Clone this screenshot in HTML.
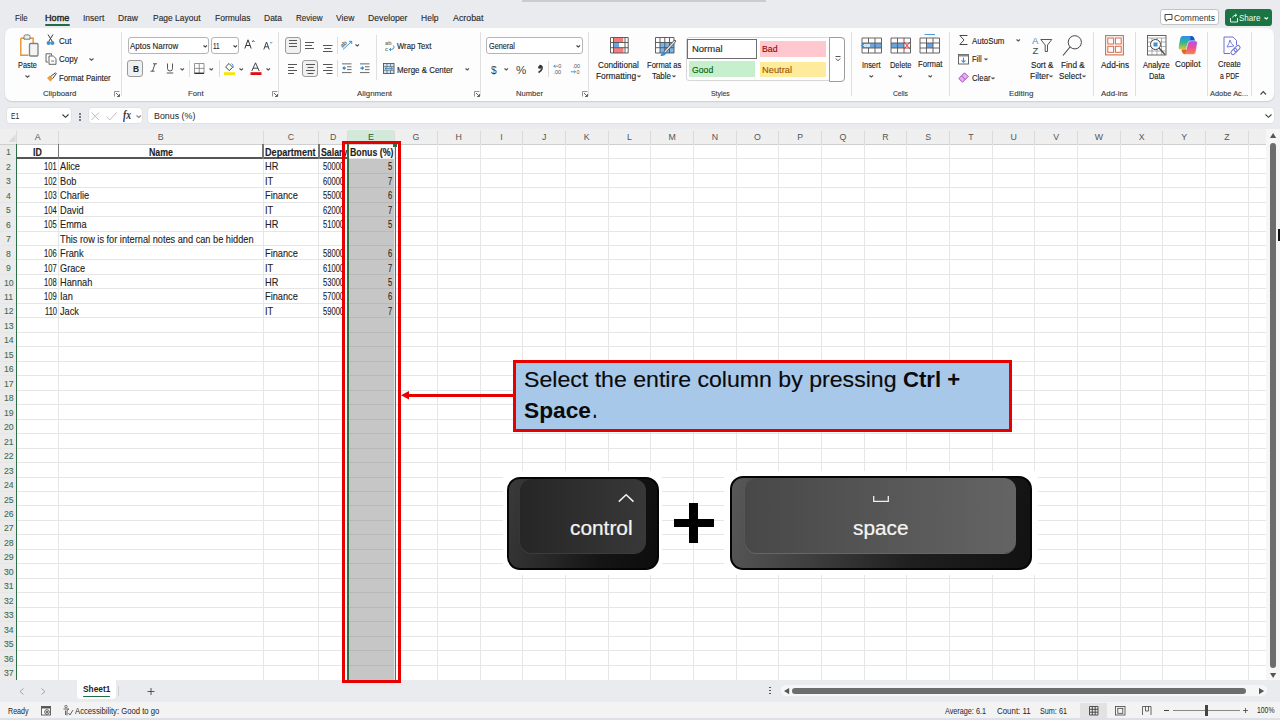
<!DOCTYPE html><html><head><meta charset="utf-8"><style>
*{margin:0;padding:0;box-sizing:border-box}
html,body{width:1280px;height:720px;overflow:hidden;background:#e9ebef;font-family:"Liberation Sans",sans-serif;color:#262626}
.a{position:absolute}
.t{position:absolute;white-space:nowrap;line-height:1}
svg{overflow:visible}
</style></head><body>
<div class="a" style="left:522.00px;top:0.00px;width:244.00px;height:1.50px;background:#c9ccd2;"></div>
<div class="t" style="left:14.50px;top:13.93px;font-size:9.3px;color:#262626;transform:scaleX(0.835);transform-origin:0 0;-webkit-text-stroke:0.1px #262626;">File</div>
<div class="t" style="left:45.00px;top:13.93px;font-size:9.3px;color:#262626;transform:scaleX(0.979);transform-origin:0 0;-webkit-text-stroke:0.4px #262626;">Home</div>
<div class="t" style="left:82.50px;top:13.93px;font-size:9.3px;color:#262626;transform:scaleX(0.916);transform-origin:0 0;-webkit-text-stroke:0.1px #262626;">Insert</div>
<div class="t" style="left:118.00px;top:13.93px;font-size:9.3px;color:#262626;transform:scaleX(0.921);transform-origin:0 0;-webkit-text-stroke:0.1px #262626;">Draw</div>
<div class="t" style="left:152.50px;top:13.93px;font-size:9.3px;color:#262626;transform:scaleX(0.910);transform-origin:0 0;-webkit-text-stroke:0.1px #262626;">Page Layout</div>
<div class="t" style="left:214.50px;top:13.93px;font-size:9.3px;color:#262626;transform:scaleX(0.915);transform-origin:0 0;-webkit-text-stroke:0.1px #262626;">Formulas</div>
<div class="t" style="left:264.00px;top:13.93px;font-size:9.3px;color:#262626;transform:scaleX(0.915);transform-origin:0 0;-webkit-text-stroke:0.1px #262626;">Data</div>
<div class="t" style="left:296.00px;top:13.93px;font-size:9.3px;color:#262626;transform:scaleX(0.869);transform-origin:0 0;-webkit-text-stroke:0.1px #262626;">Review</div>
<div class="t" style="left:335.50px;top:13.93px;font-size:9.3px;color:#262626;transform:scaleX(0.915);transform-origin:0 0;-webkit-text-stroke:0.1px #262626;">View</div>
<div class="t" style="left:367.50px;top:13.93px;font-size:9.3px;color:#262626;transform:scaleX(0.931);transform-origin:0 0;-webkit-text-stroke:0.1px #262626;">Developer</div>
<div class="t" style="left:420.50px;top:13.93px;font-size:9.3px;color:#262626;transform:scaleX(0.916);transform-origin:0 0;-webkit-text-stroke:0.1px #262626;">Help</div>
<div class="t" style="left:452.50px;top:13.93px;font-size:9.3px;color:#262626;transform:scaleX(0.952);transform-origin:0 0;-webkit-text-stroke:0.1px #262626;">Acrobat</div>
<div class="a" style="left:45.00px;top:24.20px;width:25.00px;height:2.00px;background:#1e6e42;border-radius:1px"></div>
<div class="a" style="left:1159.80px;top:9.10px;width:59.40px;height:16.30px;background:#fff;border:1px solid #c4c4c4;border-radius:3px"></div>
<svg class="a" style="left:1163.5px;top:13px;" width="9" height="9" viewBox="0 0 9 9"><path d="M1 1.5 H8 V6.5 H4 L2 8.2 V6.5 H1 Z" stroke="#333" stroke-width="0.9" fill="none"/></svg>
<div class="t" style="left:1173.50px;top:12.87px;font-size:9.6px;color:#333;transform:scaleX(0.883);transform-origin:0 0;">Comments</div>
<div class="a" style="left:1224.90px;top:9.10px;width:47.10px;height:16.90px;background:#1a7443;border-radius:3px"></div>
<svg class="a" style="left:1228.5px;top:12.5px;" width="10" height="10" viewBox="0 0 10 10"><path d="M1.5 5 V9 H8.5 V5" stroke="#fff" stroke-width="0.9" fill="none"/><path d="M3.5 4.5 Q4 2 7.5 2.2 M6 0.8 L7.7 2.2 L6 3.6" stroke="#fff" stroke-width="0.9" fill="none"/></svg>
<div class="t" style="left:1238.50px;top:12.87px;font-size:9.6px;color:#eafff0;transform:scaleX(0.839);transform-origin:0 0;">Share</div>
<svg class="a" style="left:1264.05px;top:16.675px;" width="4.5" height="2.25" viewBox="0 0 4.5 2.25"><path d="M0.5 0.5 L2.25 2.05 L4.0 0.5" stroke="#fff" stroke-width="1.15" fill="none"/></svg>
<div class="a" style="left:5.00px;top:28.00px;width:1269.00px;height:72.75px;background:#fdfdfd;border-radius:7px;box-shadow:0 1px 1.5px rgba(0,0,0,0.13)"></div>
<div class="a" style="left:121.00px;top:32.00px;width:1.00px;height:64.00px;background:#e0e0e0;"></div>
<div class="a" style="left:277.80px;top:32.00px;width:1.00px;height:64.00px;background:#e0e0e0;"></div>
<div class="a" style="left:479.80px;top:32.00px;width:1.00px;height:64.00px;background:#e0e0e0;"></div>
<div class="a" style="left:587.80px;top:32.00px;width:1.00px;height:64.00px;background:#e0e0e0;"></div>
<div class="a" style="left:851.00px;top:32.00px;width:1.00px;height:64.00px;background:#e0e0e0;"></div>
<div class="a" style="left:948.90px;top:32.00px;width:1.00px;height:64.00px;background:#e0e0e0;"></div>
<div class="a" style="left:1093.00px;top:32.00px;width:1.00px;height:64.00px;background:#e0e0e0;"></div>
<div class="a" style="left:1135.10px;top:32.00px;width:1.00px;height:64.00px;background:#e0e0e0;"></div>
<div class="a" style="left:1207.00px;top:32.00px;width:1.00px;height:64.00px;background:#e0e0e0;"></div>
<div class="a" style="left:1250.50px;top:32.00px;width:1.00px;height:64.00px;background:#e0e0e0;"></div>
<div class="t" style="left:43.00px;top:90.33px;font-size:8.0px;color:#3b3b3b;transform:scaleX(0.973);transform-origin:0 0;-webkit-text-stroke:0.12px #3b3b3b;">Clipboard</div>
<svg class="a" style="left:113.5px;top:90.5px;" width="6" height="6" viewBox="0 0 6 6"><path d="M0.5 0.5 H5.5 M0.5 0.5 V5.5" stroke="#777" stroke-width="0.8" fill="none"/><path d="M2 2 L5.5 5.5 M5.5 3 V5.5 H3" stroke="#555" stroke-width="0.9" fill="none"/></svg>
<div class="t" style="left:187.50px;top:90.33px;font-size:8.0px;color:#3b3b3b;transform:scaleX(0.975);transform-origin:0 0;-webkit-text-stroke:0.12px #3b3b3b;">Font</div>
<svg class="a" style="left:271.5px;top:90.5px;" width="6" height="6" viewBox="0 0 6 6"><path d="M0.5 0.5 H5.5 M0.5 0.5 V5.5" stroke="#777" stroke-width="0.8" fill="none"/><path d="M2 2 L5.5 5.5 M5.5 3 V5.5 H3" stroke="#555" stroke-width="0.9" fill="none"/></svg>
<div class="t" style="left:356.90px;top:90.33px;font-size:8.0px;color:#3b3b3b;transform:scaleX(0.984);transform-origin:0 0;-webkit-text-stroke:0.12px #3b3b3b;">Alignment</div>
<svg class="a" style="left:473.5px;top:90.5px;" width="6" height="6" viewBox="0 0 6 6"><path d="M0.5 0.5 H5.5 M0.5 0.5 V5.5" stroke="#777" stroke-width="0.8" fill="none"/><path d="M2 2 L5.5 5.5 M5.5 3 V5.5 H3" stroke="#555" stroke-width="0.9" fill="none"/></svg>
<div class="t" style="left:515.60px;top:90.33px;font-size:8.0px;color:#3b3b3b;transform:scaleX(0.946);transform-origin:0 0;-webkit-text-stroke:0.12px #3b3b3b;">Number</div>
<svg class="a" style="left:581.5px;top:90.5px;" width="6" height="6" viewBox="0 0 6 6"><path d="M0.5 0.5 H5.5 M0.5 0.5 V5.5" stroke="#777" stroke-width="0.8" fill="none"/><path d="M2 2 L5.5 5.5 M5.5 3 V5.5 H3" stroke="#555" stroke-width="0.9" fill="none"/></svg>
<div class="t" style="left:711.10px;top:90.33px;font-size:8.0px;color:#3b3b3b;transform:scaleX(0.862);transform-origin:0 0;-webkit-text-stroke:0.12px #3b3b3b;">Styles</div>
<div class="t" style="left:893.00px;top:90.33px;font-size:8.0px;color:#3b3b3b;transform:scaleX(0.843);transform-origin:0 0;-webkit-text-stroke:0.12px #3b3b3b;">Cells</div>
<div class="t" style="left:1009.40px;top:90.33px;font-size:8.0px;color:#3b3b3b;transform:scaleX(0.997);transform-origin:0 0;-webkit-text-stroke:0.12px #3b3b3b;">Editing</div>
<div class="t" style="left:1101.30px;top:90.33px;font-size:8.0px;color:#3b3b3b;transform:scaleX(0.988);transform-origin:0 0;-webkit-text-stroke:0.12px #3b3b3b;">Add-ins</div>
<div class="t" style="left:1210.00px;top:89.83px;font-size:8.0px;color:#3b3b3b;transform:scaleX(0.929);transform-origin:0 0;-webkit-text-stroke:0.12px #3b3b3b;">Adobe Ac...</div>
<svg class="a" style="left:1260px;top:91px;" width="6.5" height="4" viewBox="0 0 6.5 4"><path d="M0.5 3.5 L3.25 0.6 L6 3.5" stroke="#444" stroke-width="1.1" fill="none"/></svg>
<div class="a" style="left:1260px;top:90.5px;width:0;height:0"></div>
<svg class="a" style="left:19px;top:34px;" width="20" height="23" viewBox="0 0 20 23"><path d="M1.8 4.2 H5 M11 4.2 H14.2 V9 M1.8 4.2 V21.3 H9.5" stroke="#e8922f" stroke-width="1.4" fill="none"/><path d="M5 2.5 Q5 0.9 6.5 0.9 H9.5 Q11 0.9 11 2.5 V5.2 H5 Z" stroke="#777" stroke-width="1" fill="#eee"/><rect x="10.5" y="9.5" width="8.5" height="12.5" rx="1" stroke="#808080" stroke-width="1.3" fill="#f4f4f4"/></svg>
<div class="t" style="left:18.10px;top:61.27px;font-size:8.9px;color:#202020;transform:scaleX(0.827);transform-origin:0 0;-webkit-text-stroke:0.12px #202020;">Paste</div>
<svg class="a" style="left:24.7px;top:74.95px;" width="5" height="2.5" viewBox="0 0 5 2.5"><path d="M0.5 0.5 L2.5 2.3 L4.5 0.5" stroke="#555" stroke-width="1.15" fill="none"/></svg>
<svg class="a" style="left:46px;top:34px;" width="9" height="12" viewBox="0 0 9 12"><path d="M2 0.5 L6 7 M7 0.5 L3 7" stroke="#3a3a3a" stroke-width="1"/><circle cx="2.6" cy="9" r="2" fill="#3c8fd0"/><circle cx="6.4" cy="9" r="2" fill="#3c8fd0"/></svg>
<div class="t" style="left:58.80px;top:37.07px;font-size:8.9px;color:#202020;transform:scaleX(0.903);transform-origin:0 0;-webkit-text-stroke:0.12px #202020;">Cut</div>
<svg class="a" style="left:45px;top:53px;" width="12" height="12" viewBox="0 0 12 12"><path d="M3 9 H1 V0.8 H6.5 V2.5" stroke="#555" stroke-width="0.9" fill="none"/><path d="M4 3 H8.3 L11 5.6 V11.3 H4 Z" stroke="#555" stroke-width="0.9" fill="#fff"/><path d="M6 8 H9" stroke="#555" stroke-width="0.8"/></svg>
<div class="t" style="left:58.80px;top:55.27px;font-size:8.9px;color:#202020;transform:scaleX(0.900);transform-origin:0 0;-webkit-text-stroke:0.12px #202020;">Copy</div>
<svg class="a" style="left:88.5px;top:57.95px;" width="5" height="2.5" viewBox="0 0 5 2.5"><path d="M0.5 0.5 L2.5 2.3 L4.5 0.5" stroke="#555" stroke-width="1.15" fill="none"/></svg>
<svg class="a" style="left:45.5px;top:71.5px;" width="11" height="11" viewBox="0 0 11 11"><path d="M1 6 L4.5 9.8 L7 6.5 L4 3.5 Z" fill="#f0a030"/><path d="M4.5 4.5 L9.5 0.8 L10.3 1.6 L6.7 6.5" stroke="#444" stroke-width="1" fill="none"/></svg>
<div class="t" style="left:58.80px;top:73.97px;font-size:8.9px;color:#202020;transform:scaleX(0.880);transform-origin:0 0;-webkit-text-stroke:0.12px #202020;">Format Painter</div>
<div class="a" style="left:127.50px;top:37.00px;width:81.50px;height:17.25px;background:#fff;border:1px solid #b5b5b5;border-radius:3px"></div>
<div class="t" style="left:129.80px;top:42.02px;font-size:8.6px;color:#262626;transform:scaleX(0.927);transform-origin:0 0;-webkit-text-stroke:0.12px #262626;">Aptos Narrow</div>
<svg class="a" style="left:202.75px;top:44.675px;" width="4.5" height="2.25" viewBox="0 0 4.5 2.25"><path d="M0.5 0.5 L2.25 2.05 L4.0 0.5" stroke="#444" stroke-width="1.15" fill="none"/></svg>
<div class="a" style="left:211.00px;top:37.00px;width:27.80px;height:17.25px;background:#fff;border:1px solid #b5b5b5;border-radius:3px"></div>
<div class="t" style="left:213.20px;top:42.02px;font-size:8.6px;color:#262626;transform:scaleX(0.738);transform-origin:0 0;-webkit-text-stroke:0.12px #262626;">11</div>
<svg class="a" style="left:232.55px;top:44.675px;" width="4.5" height="2.25" viewBox="0 0 4.5 2.25"><path d="M0.5 0.5 L2.25 2.05 L4.0 0.5" stroke="#444" stroke-width="1.15" fill="none"/></svg>
<svg class="a" style="left:243.5px;top:39px;" width="11" height="10" viewBox="0 0 11 10"><path d="M0.8 9.5 L4 0.8 L7.2 9.5 M2 6.5 H6" stroke="#333" stroke-width="1" fill="none"/><path d="M8.2 3 L9.3 1.5 L10.4 3" stroke="#333" stroke-width="0.8" fill="none"/></svg>
<svg class="a" style="left:262.5px;top:40.5px;" width="10" height="9" viewBox="0 0 10 9"><path d="M0.8 8.5 L3.5 1 L6.2 8.5 M1.8 5.8 H5.2" stroke="#333" stroke-width="0.9" fill="none"/><path d="M7.2 1 L8.2 2.3 L9.2 1" stroke="#3c8fd0" stroke-width="0.8" fill="none"/></svg>
<div class="a" style="left:127.30px;top:60.30px;width:15.80px;height:16.70px;background:#f0f0f0;border:1px solid #9a9a9a;border-radius:3px"></div>
<div class="t" style="left:132.60px;top:64.98px;font-size:9px;font-weight:bold;color:#2b2b2b;transform:scaleX(0.926);transform-origin:0 0;-webkit-text-stroke:0.12px #2b2b2b;">B</div>
<svg class="a" style="left:149.5px;top:63px;" width="7" height="9" viewBox="0 0 7 9"><path d="M3 0.8 H7 M0.5 8.2 H4.5 M5 0.8 L2.5 8.2" stroke="#444" stroke-width="0.9" fill="none"/></svg>
<svg class="a" style="left:165.5px;top:63px;" width="8" height="11" viewBox="0 0 8 11"><path d="M1.5 0.5 V5.5 Q1.5 8 4 8 Q6.5 8 6.5 5.5 V0.5 M0.8 10 H7.2" stroke="#444" stroke-width="0.9" fill="none"/></svg>
<svg class="a" style="left:179.95px;top:67.575px;" width="4.5" height="2.25" viewBox="0 0 4.5 2.25"><path d="M0.5 0.5 L2.25 2.05 L4.0 0.5" stroke="#555" stroke-width="1.15" fill="none"/></svg>
<div class="a" style="left:188.90px;top:60.00px;width:1.00px;height:17.00px;background:#dcdcdc;"></div>
<svg class="a" style="left:194px;top:63px;" width="10.5" height="11" viewBox="0 0 10.5 11"><path d="M0.5 0.5 H10 V10.3 H0.5 Z M5.25 0.5 V10.3 M0.5 5.4 H10" stroke="#7a7a7a" stroke-width="0.8" fill="none"/><path d="M0.5 10.3 H10" stroke="#222" stroke-width="1.2"/></svg>
<svg class="a" style="left:209.25px;top:67.575px;" width="4.5" height="2.25" viewBox="0 0 4.5 2.25"><path d="M0.5 0.5 L2.25 2.05 L4.0 0.5" stroke="#555" stroke-width="1.15" fill="none"/></svg>
<div class="a" style="left:218.90px;top:60.00px;width:1.00px;height:17.00px;background:#dcdcdc;"></div>
<svg class="a" style="left:223.5px;top:61.5px;" width="11" height="13.5" viewBox="0 0 11 13.5"><path d="M5 1.5 L8.7 5.2 L5.3 8.6 L1.6 4.9 Z" stroke="#333" stroke-width="0.9" fill="none"/><path d="M7.5 1.5 Q9.8 2.5 9.2 5.8" stroke="#3c8fd0" stroke-width="0.9" fill="none"/><rect x="0" y="10.2" width="11" height="2.8" fill="#f4e60a"/></svg>
<svg class="a" style="left:238.75px;top:67.575px;" width="4.5" height="2.25" viewBox="0 0 4.5 2.25"><path d="M0.5 0.5 L2.25 2.05 L4.0 0.5" stroke="#555" stroke-width="1.15" fill="none"/></svg>
<svg class="a" style="left:250px;top:61.5px;" width="11.5" height="13.5" viewBox="0 0 11.5 13.5"><path d="M1.8 9 L5.5 0.8 L9.2 9 M3 6.2 H8" stroke="#333" stroke-width="0.9" fill="none"/><rect x="0.5" y="10.2" width="11" height="2.8" fill="#e01010"/></svg>
<svg class="a" style="left:265.75px;top:67.575px;" width="4.5" height="2.25" viewBox="0 0 4.5 2.25"><path d="M0.5 0.5 L2.25 2.05 L4.0 0.5" stroke="#555" stroke-width="1.15" fill="none"/></svg>
<div class="a" style="left:284.70px;top:37.00px;width:15.90px;height:17.25px;background:#f0f0f0;border:1px solid #9a9a9a;border-radius:3px"></div>
<svg class="a" style="left:288.8px;top:40px;" width="12" height="12" viewBox="0 0 12 12"><rect x="0" y="0" width="8" height="1" fill="#555"/><rect x="0" y="3" width="8" height="1" fill="#555"/><rect x="0" y="6" width="8" height="1" fill="#555"/></svg>
<svg class="a" style="left:305px;top:42px;" width="12" height="12" viewBox="0 0 12 12"><rect x="0" y="0" width="9" height="1" fill="#555"/><rect x="0" y="3" width="7" height="1" fill="#555"/><rect x="0" y="6" width="9" height="1" fill="#555"/></svg>
<svg class="a" style="left:322.5px;top:45px;" width="12" height="12" viewBox="0 0 12 12"><rect x="0" y="0" width="9.5" height="1" fill="#555"/><rect x="1.2" y="3" width="7" height="1" fill="#555"/><rect x="0" y="6" width="9.5" height="1" fill="#555"/></svg>
<div class="a" style="left:336.80px;top:37.00px;width:1.00px;height:17.00px;background:#dcdcdc;"></div>
<svg class="a" style="left:341px;top:39px;" width="12" height="12" viewBox="0 0 12 12"><text x="0" y="0" font-size="6" font-weight="bold" fill="#666" font-family="Liberation Sans" transform="translate(1.5 9) rotate(-45)">ab</text><path d="M2 10.5 L10.5 2.5 M8 2.3 H10.7 V5" stroke="#2a86d0" stroke-width="0.9" fill="none"/></svg>
<svg class="a" style="left:355.35px;top:44.375px;" width="4.5" height="2.25" viewBox="0 0 4.5 2.25"><path d="M0.5 0.5 L2.25 2.05 L4.0 0.5" stroke="#555" stroke-width="1.15" fill="none"/></svg>
<svg class="a" style="left:288.3px;top:64px;" width="12" height="12" viewBox="0 0 12 12"><rect x="0" y="0" width="9" height="1" fill="#555"/><rect x="0" y="3" width="6" height="1" fill="#555"/><rect x="0" y="6" width="9" height="1" fill="#555"/><rect x="0" y="9" width="6" height="1" fill="#555"/></svg>
<div class="a" style="left:302.20px;top:60.30px;width:15.60px;height:17.10px;background:#f0f0f0;border:1px solid #9a9a9a;border-radius:3px"></div>
<svg class="a" style="left:305.5px;top:64px;" width="12" height="12" viewBox="0 0 12 12"><rect x="0" y="0" width="9" height="1" fill="#555"/><rect x="1.5" y="3" width="6" height="1" fill="#555"/><rect x="0" y="6" width="9" height="1" fill="#555"/><rect x="1.5" y="9" width="6" height="1" fill="#555"/></svg>
<svg class="a" style="left:322.5px;top:64px;" width="12" height="12" viewBox="0 0 12 12"><rect x="0" y="0" width="9.5" height="1" fill="#555"/><rect x="3.5" y="3" width="6" height="1" fill="#555"/><rect x="0" y="6" width="9.5" height="1" fill="#555"/><rect x="3.5" y="9" width="6" height="1" fill="#555"/></svg>
<div class="a" style="left:336.80px;top:60.00px;width:1.00px;height:17.00px;background:#dcdcdc;"></div>
<svg class="a" style="left:342px;top:63px;" width="10" height="11" viewBox="0 0 10 11"><rect x="0" y="0.3" width="9.5" height="1.1" fill="#777"/><rect x="5" y="3.2" width="4.5" height="1.1" fill="#777"/><rect x="5" y="6" width="4.5" height="1.1" fill="#777"/><rect x="0" y="9" width="9.5" height="1.1" fill="#777"/><path d="M4 5.1 H1.2 M2.6 3.6 L1 5.1 L2.6 6.6" stroke="#2a86d0" stroke-width="1.1" fill="none"/></svg>
<svg class="a" style="left:359.5px;top:63px;" width="10" height="11" viewBox="0 0 10 11"><rect x="0" y="0.3" width="9.5" height="1.1" fill="#777"/><rect x="5" y="3.2" width="4.5" height="1.1" fill="#777"/><rect x="5" y="6" width="4.5" height="1.1" fill="#777"/><rect x="0" y="9" width="9.5" height="1.1" fill="#777"/><path d="M0.3 5.1 H3.3 M1.9 3.6 L3.5 5.1 L1.9 6.6" stroke="#2a86d0" stroke-width="1.1" fill="none"/></svg>
<svg class="a" style="left:384.5px;top:40px;" width="11" height="11.5" viewBox="0 0 11 11.5"><text x="0" y="5" font-size="6" fill="#555" font-family="Liberation Sans">ab</text><text x="0" y="11" font-size="6" fill="#555" font-family="Liberation Sans">c</text><path d="M8.3 5.5 Q10.5 8.5 6.5 9.5 H4.5 M6 8 L4.4 9.5 L6 11" stroke="#2a86d0" stroke-width="0.9" fill="none"/></svg>
<div class="a" style="left:375.80px;top:35.00px;width:1.00px;height:45.00px;background:#e0e0e0;"></div>
<div class="t" style="left:396.90px;top:42.27px;font-size:8.9px;color:#202020;transform:scaleX(0.866);transform-origin:0 0;-webkit-text-stroke:0.12px #202020;">Wrap Text</div>
<svg class="a" style="left:383px;top:63px;" width="11.5" height="11" viewBox="0 0 11.5 11"><rect x="0.5" y="0.5" width="10.5" height="10" fill="#cfe6f8" stroke="#555" stroke-width="0.9"/><path d="M0.5 3.7 H11 M0.5 7.2 H11 M4 0.5 V3.7 M7.5 0.5 V3.7 M4 7.2 V10.5 M7.5 7.2 V10.5" stroke="#555" stroke-width="0.7"/><path d="M2 5.45 H9.5 M3.5 4.3 L2 5.45 L3.5 6.6 M8 4.3 L9.5 5.45 L8 6.6" stroke="#2a7cc7" stroke-width="0.8" fill="none"/></svg>
<div class="t" style="left:396.90px;top:65.87px;font-size:8.9px;color:#202020;transform:scaleX(0.893);transform-origin:0 0;-webkit-text-stroke:0.12px #202020;">Merge & Center</div>
<svg class="a" style="left:464.75px;top:67.675px;" width="4.5" height="2.25" viewBox="0 0 4.5 2.25"><path d="M0.5 0.5 L2.25 2.05 L4.0 0.5" stroke="#555" stroke-width="1.15" fill="none"/></svg>
<div class="a" style="left:486.20px;top:37.00px;width:96.90px;height:17.25px;background:#fff;border:1px solid #b5b5b5;border-radius:3px"></div>
<div class="t" style="left:488.80px;top:42.02px;font-size:8.6px;color:#262626;transform:scaleX(0.849);transform-origin:0 0;-webkit-text-stroke:0.12px #262626;">General</div>
<svg class="a" style="left:576.35px;top:44.675px;" width="4.5" height="2.25" viewBox="0 0 4.5 2.25"><path d="M0.5 0.5 L2.25 2.05 L4.0 0.5" stroke="#444" stroke-width="1.15" fill="none"/></svg>
<div class="t" style="left:490.60px;top:64.69px;font-size:11px;color:#444;transform:scaleX(0.934);transform-origin:0 0;-webkit-text-stroke:0;">$</div>
<svg class="a" style="left:503.75px;top:67.675px;" width="4.5" height="2.25" viewBox="0 0 4.5 2.25"><path d="M0.5 0.5 L2.25 2.05 L4.0 0.5" stroke="#555" stroke-width="1.15" fill="none"/></svg>
<div class="t" style="left:516.00px;top:64.69px;font-size:11px;color:#444;transform:scaleX(1.052);transform-origin:0 0;-webkit-text-stroke:0;">%</div>
<svg class="a" style="left:537px;top:65px;" width="6" height="8" viewBox="0 0 6 8"><path d="M2.5 0.5 Q5.5 0.5 5 3.5 Q4.5 6 1.5 7.5" stroke="#333" stroke-width="1.6" fill="none"/><circle cx="2.8" cy="2.2" r="1.6" fill="#333"/></svg>
<div class="a" style="left:548.10px;top:61.00px;width:1.00px;height:16.00px;background:#dcdcdc;"></div>
<svg class="a" style="left:552.5px;top:62.5px;" width="12" height="12" viewBox="0 0 12 12"><text x="5.3" y="5.2" font-size="5.5" fill="#555" font-family="Liberation Sans">0</text><text x="0.5" y="10.8" font-size="5.5" fill="#555" font-family="Liberation Sans">.00</text><path d="M5 3.2 H0.8 M2.2 1.8 L0.8 3.2 L2.2 4.6" stroke="#3c8fd0" stroke-width="0.9" fill="none"/></svg>
<svg class="a" style="left:569.5px;top:62.5px;" width="12" height="12" viewBox="0 0 12 12"><text x="2.5" y="5.2" font-size="5.5" fill="#555" font-family="Liberation Sans">.00</text><text x="6.5" y="10.8" font-size="5.5" fill="#555" font-family="Liberation Sans">0</text><path d="M0.8 8.8 H5.5 M4.1 7.4 L5.5 8.8 L4.1 10.2" stroke="#3c8fd0" stroke-width="0.9" fill="none"/></svg>
<svg class="a" style="left:609.5px;top:37px;" width="19" height="16.5" viewBox="0 0 19 16.5"><rect x="3.5" y="0.5" width="9.7" height="5" fill="#f47c7c"/><rect x="3.5" y="5.5" width="5.5" height="5" fill="#6aa5e0"/><rect x="3.5" y="10.5" width="10" height="5.5" fill="#f47c7c"/><path d="M0.5 0.5 H18.2 V16 H0.5 Z M3.5 0.5 V16 M15 0.5 V16 M0.5 5.5 H18.2 M0.5 10.7 H18.2" stroke="#505050" stroke-width="0.9" fill="none"/></svg>
<div class="t" style="left:598.30px;top:60.57px;font-size:8.9px;color:#202020;transform:scaleX(0.920);transform-origin:0 0;-webkit-text-stroke:0.12px #202020;">Conditional</div>
<div class="t" style="left:595.80px;top:72.07px;font-size:8.9px;color:#202020;transform:scaleX(0.945);transform-origin:0 0;-webkit-text-stroke:0.12px #202020;">Formatting</div>
<svg class="a" style="left:636.5px;top:75.2px;" width="4" height="2.0" viewBox="0 0 4 2.0"><path d="M0.5 0.5 L2.0 1.8 L3.5 0.5" stroke="#555" stroke-width="1.15" fill="none"/></svg>
<svg class="a" style="left:654.5px;top:37px;" width="21" height="20" viewBox="0 0 21 20"><rect x="0.5" y="0.5" width="18.5" height="15.5" fill="#fff"/><rect x="5" y="5.5" width="14" height="10.5" fill="#79b4ea"/><path d="M0.5 0.5 H19 V16 H0.5 Z M5 0.5 V16 M9.8 0.5 V16 M14.5 0.5 V16 M0.5 5.5 H19 M0.5 10.7 H19" stroke="#505050" stroke-width="0.9" fill="none"/><path d="M19.8 4.2 L9.5 15.5" stroke="#555" stroke-width="2.6" stroke-linecap="round"/><path d="M19.8 4.2 L9.5 15.5" stroke="#f6efe6" stroke-width="1.2"/><path d="M9.8 14.5 Q6.5 15 5.5 19 Q10 19.5 11.5 16 Z" fill="#3c8fd0"/></svg>
<div class="t" style="left:646.80px;top:60.57px;font-size:8.9px;color:#202020;transform:scaleX(0.856);transform-origin:0 0;-webkit-text-stroke:0.12px #202020;">Format as</div>
<div class="t" style="left:652.00px;top:72.07px;font-size:8.9px;color:#202020;transform:scaleX(0.893);transform-origin:0 0;-webkit-text-stroke:0.12px #202020;">Table</div>
<svg class="a" style="left:672.0px;top:75.2px;" width="4" height="2.0" viewBox="0 0 4 2.0"><path d="M0.5 0.5 L2.0 1.8 L3.5 0.5" stroke="#555" stroke-width="1.15" fill="none"/></svg>
<div class="a" style="left:685.80px;top:37.30px;width:159.20px;height:44.00px;background:#fff;border:1px solid #d7d7d7;border-radius:3px"></div>
<div class="a" style="left:687.30px;top:39.00px;width:70.10px;height:19.70px;background:#fff;border:1.6px solid #6e6e6e"></div>
<div class="t" style="left:691.80px;top:45.35px;font-size:8.8px;color:#262626;transform:scaleX(1.078);transform-origin:0 0;-webkit-text-stroke:0.12px #262626;">Normal</div>
<div class="a" style="left:759.50px;top:41.10px;width:66.60px;height:15.70px;background:#ffc7ce;"></div>
<div class="t" style="left:762.40px;top:45.35px;font-size:8.8px;color:#9c0006;transform:scaleX(0.996);transform-origin:0 0;-webkit-text-stroke:0.12px #9c0006;">Bad</div>
<div class="a" style="left:688.60px;top:61.10px;width:66.40px;height:15.70px;background:#c6efce;"></div>
<div class="t" style="left:691.80px;top:65.55px;font-size:8.8px;color:#006100;transform:scaleX(0.985);transform-origin:0 0;-webkit-text-stroke:0.12px #006100;">Good</div>
<div class="a" style="left:759.50px;top:61.80px;width:66.60px;height:15.20px;background:#ffeb9c;"></div>
<div class="t" style="left:762.40px;top:65.55px;font-size:8.8px;color:#9c5700;transform:scaleX(1.057);transform-origin:0 0;-webkit-text-stroke:0.12px #9c5700;">Neutral</div>
<div class="a" style="left:828.60px;top:37.00px;width:16.20px;height:44.50px;background:#fff;border:1px solid #9c9c9c;border-radius:0 4px 4px 0"></div>
<svg class="a" style="left:834.5px;top:56px;" width="6" height="6" viewBox="0 0 6 6"><path d="M0.5 0.5 H5.5" stroke="#444" stroke-width="0.9"/><path d="M0.8 2.5 L3 4.8 L5.2 2.5" stroke="#444" stroke-width="0.9" fill="none"/></svg>
<svg class="a" style="left:861.5px;top:37.5px;" width="19.5" height="15" viewBox="0 0 19.5 15"><rect x="0.0" y="5.0" width="6.5" height="5.0" fill="#6aa5e0"/><rect x="6.5" y="5.0" width="6.5" height="5.0" fill="#6aa5e0"/><rect x="13.0" y="5.0" width="6.5" height="5.0" fill="#6aa5e0"/><path d="M0.0 0 V15" stroke="#555" stroke-width="0.9"/><path d="M6.5 0 V15" stroke="#555" stroke-width="0.9"/><path d="M13.0 0 V15" stroke="#555" stroke-width="0.9"/><path d="M19.5 0 V15" stroke="#555" stroke-width="0.9"/><path d="M0 0.0 H19.5" stroke="#555" stroke-width="0.9"/><path d="M0 5.0 H19.5" stroke="#555" stroke-width="0.9"/><path d="M0 10.0 H19.5" stroke="#555" stroke-width="0.9"/><path d="M0 15.0 H19.5" stroke="#555" stroke-width="0.9"/><path d="M8 5.5 H1.5 L0 7.5 L1.5 9.5 H8" stroke="#3c8fd0" stroke-width="1.2" fill="#cfe6f8"/><path d="M3 5 L0.5 7.5 L3 10" stroke="#3c8fd0" stroke-width="1" fill="none"/></svg>
<div class="t" style="left:861.80px;top:60.87px;font-size:8.9px;color:#202020;transform:scaleX(0.831);transform-origin:0 0;-webkit-text-stroke:0.12px #202020;">Insert</div>
<svg class="a" style="left:868.75px;top:75.075px;" width="4.5" height="2.25" viewBox="0 0 4.5 2.25"><path d="M0.5 0.5 L2.25 2.05 L4.0 0.5" stroke="#555" stroke-width="1.15" fill="none"/></svg>
<svg class="a" style="left:891px;top:37.5px;" width="19.5" height="15" viewBox="0 0 19.5 15"><rect x="0.0" y="5.0" width="6.5" height="5.0" fill="#6aa5e0"/><rect x="6.5" y="5.0" width="6.5" height="5.0" fill="#6aa5e0"/><path d="M0.0 0 V15" stroke="#555" stroke-width="0.9"/><path d="M6.5 0 V15" stroke="#555" stroke-width="0.9"/><path d="M13.0 0 V15" stroke="#555" stroke-width="0.9"/><path d="M19.5 0 V15" stroke="#555" stroke-width="0.9"/><path d="M0 0.0 H19.5" stroke="#555" stroke-width="0.9"/><path d="M0 5.0 H19.5" stroke="#555" stroke-width="0.9"/><path d="M0 10.0 H19.5" stroke="#555" stroke-width="0.9"/><path d="M0 15.0 H19.5" stroke="#555" stroke-width="0.9"/><path d="M13 4 L19 11 M19 4 L13 11" stroke="#e03030" stroke-width="1"/></svg>
<div class="t" style="left:889.80px;top:60.87px;font-size:8.9px;color:#202020;transform:scaleX(0.836);transform-origin:0 0;-webkit-text-stroke:0.12px #202020;">Delete</div>
<svg class="a" style="left:897.95px;top:75.075px;" width="4.5" height="2.25" viewBox="0 0 4.5 2.25"><path d="M0.5 0.5 L2.25 2.05 L4.0 0.5" stroke="#555" stroke-width="1.15" fill="none"/></svg>
<svg class="a" style="left:920.3px;top:37.5px;" width="19.5" height="15" viewBox="0 0 19.5 15"><rect x="6.5" y="5.0" width="6.5" height="5.0" fill="#6aa5e0"/><path d="M0.0 0 V15" stroke="#555" stroke-width="0.9"/><path d="M6.5 0 V15" stroke="#555" stroke-width="0.9"/><path d="M13.0 0 V15" stroke="#555" stroke-width="0.9"/><path d="M19.5 0 V15" stroke="#555" stroke-width="0.9"/><path d="M0 0.0 H19.5" stroke="#555" stroke-width="0.9"/><path d="M0 5.0 H19.5" stroke="#555" stroke-width="0.9"/><path d="M0 10.0 H19.5" stroke="#555" stroke-width="0.9"/><path d="M0 15.0 H19.5" stroke="#555" stroke-width="0.9"/><path d="M4.5 -3.5 H15" stroke="#3c8fd0" stroke-width="0.9"/></svg>
<div class="t" style="left:917.80px;top:60.47px;font-size:8.9px;color:#202020;transform:scaleX(0.870);transform-origin:0 0;-webkit-text-stroke:0.12px #202020;">Format</div>
<svg class="a" style="left:927.55px;top:75.075px;" width="4.5" height="2.25" viewBox="0 0 4.5 2.25"><path d="M0.5 0.5 L2.25 2.05 L4.0 0.5" stroke="#555" stroke-width="1.15" fill="none"/></svg>
<svg class="a" style="left:958.8px;top:34.8px;" width="9" height="10" viewBox="0 0 9 10"><path d="M8.5 0.5 H0.8 L5 5 L0.8 9.5 H8.5" stroke="#333" stroke-width="0.9" fill="none"/></svg>
<div class="t" style="left:971.90px;top:36.77px;font-size:8.9px;color:#202020;transform:scaleX(0.887);transform-origin:0 0;-webkit-text-stroke:0.12px #202020;">AutoSum</div>
<svg class="a" style="left:1015.75px;top:39.375px;" width="4.5" height="2.25" viewBox="0 0 4.5 2.25"><path d="M0.5 0.5 L2.25 2.05 L4.0 0.5" stroke="#555" stroke-width="1.15" fill="none"/></svg>
<svg class="a" style="left:958px;top:53.5px;" width="11" height="10.5" viewBox="0 0 11 10.5"><rect x="0.5" y="0.5" width="10" height="9.5" fill="#fff" stroke="#555" stroke-width="0.9"/><rect x="0.5" y="0.5" width="10" height="2" fill="#888"/><path d="M5.5 3.5 V8.3 M3.5 6.3 L5.5 8.3 L7.5 6.3" stroke="#3c8fd0" stroke-width="1.1" fill="none"/></svg>
<div class="t" style="left:971.90px;top:55.27px;font-size:8.9px;color:#202020;transform:scaleX(0.846);transform-origin:0 0;-webkit-text-stroke:0.12px #202020;">Fill</div>
<svg class="a" style="left:983.5px;top:58.3px;" width="4" height="2.0" viewBox="0 0 4 2.0"><path d="M0.5 0.5 L2.0 1.8 L3.5 0.5" stroke="#555" stroke-width="1.15" fill="none"/></svg>
<svg class="a" style="left:958px;top:72px;" width="11" height="11" viewBox="0 0 11 11"><path d="M6.5 0.8 L10.2 4.5 L4.5 10.2 L0.8 6.5 Z" fill="#dcb6e8" stroke="#b146c2" stroke-width="1"/><path d="M3.5 3.8 L7.2 7.5" stroke="#b146c2" stroke-width="1"/></svg>
<div class="t" style="left:971.90px;top:73.97px;font-size:8.9px;color:#202020;transform:scaleX(0.874);transform-origin:0 0;-webkit-text-stroke:0.12px #202020;">Clear</div>
<svg class="a" style="left:991.3px;top:77.2px;" width="4" height="2.0" viewBox="0 0 4 2.0"><path d="M0.5 0.5 L2.0 1.8 L3.5 0.5" stroke="#555" stroke-width="1.15" fill="none"/></svg>
<svg class="a" style="left:1032px;top:35px;" width="21" height="20" viewBox="0 0 21 20"><text x="0" y="8.5" font-size="9.5" fill="#3c8fd0" font-family="Liberation Sans">A</text><text x="0.5" y="19" font-size="9.5" fill="#444" font-family="Liberation Sans">Z</text><path d="M8.8 4.5 H19.8 L15.5 10 V16.5 H13.2 V10 Z" stroke="#444" stroke-width="0.9" fill="none"/></svg>
<div class="t" style="left:1030.60px;top:60.57px;font-size:8.9px;color:#202020;transform:scaleX(0.909);transform-origin:0 0;-webkit-text-stroke:0.12px #202020;">Sort &</div>
<div class="t" style="left:1030.20px;top:72.07px;font-size:8.9px;color:#202020;transform:scaleX(0.952);transform-origin:0 0;-webkit-text-stroke:0.12px #202020;">Filter</div>
<svg class="a" style="left:1049.0px;top:75.2px;" width="4" height="2.0" viewBox="0 0 4 2.0"><path d="M0.5 0.5 L2.0 1.8 L3.5 0.5" stroke="#555" stroke-width="1.15" fill="none"/></svg>
<svg class="a" style="left:1062px;top:34.5px;" width="21" height="21.5" viewBox="0 0 21 21.5"><circle cx="12.8" cy="7.3" r="6.6" stroke="#444" stroke-width="1" fill="none"/><path d="M8 12 L1 20.5" stroke="#444" stroke-width="1.1"/></svg>
<div class="t" style="left:1060.60px;top:60.57px;font-size:8.9px;color:#202020;transform:scaleX(0.925);transform-origin:0 0;-webkit-text-stroke:0.12px #202020;">Find &</div>
<div class="t" style="left:1059.00px;top:72.07px;font-size:8.9px;color:#202020;transform:scaleX(0.909);transform-origin:0 0;-webkit-text-stroke:0.12px #202020;">Select</div>
<svg class="a" style="left:1082.0px;top:75.2px;" width="4" height="2.0" viewBox="0 0 4 2.0"><path d="M0.5 0.5 L2.0 1.8 L3.5 0.5" stroke="#555" stroke-width="1.15" fill="none"/></svg>
<svg class="a" style="left:1105px;top:34.5px;" width="19" height="20.5" viewBox="0 0 19 20.5"><rect x="0.6" y="0.6" width="17.8" height="19.3" fill="none" stroke="#d86a4a" stroke-width="1.1"/><rect x="2.8" y="3" width="5.8" height="6" fill="none" stroke="#d86a4a" stroke-width="1"/><rect x="10.4" y="3" width="5.8" height="6" fill="none" stroke="#d86a4a" stroke-width="1"/><rect x="2.8" y="11.3" width="5.8" height="6" fill="none" stroke="#d86a4a" stroke-width="1"/><rect x="10.4" y="11.3" width="5.8" height="6" fill="none" stroke="#d86a4a" stroke-width="1"/></svg>
<div class="t" style="left:1100.60px;top:60.57px;font-size:8.9px;color:#202020;transform:scaleX(0.935);transform-origin:0 0;-webkit-text-stroke:0.12px #202020;">Add-ins</div>
<svg class="a" style="left:1147px;top:34.5px;" width="19.5" height="20.5" viewBox="0 0 19.5 20.5"><rect x="0.5" y="0.5" width="18.5" height="19.5" fill="#fff" stroke="#555" stroke-width="0.9"/><path d="M0.5 3 H19 M0.5 7 H19 M0.5 11.5 H19 M0.5 16 H19 M5 3 V20 M10 3 V20 M14.5 3 V20" stroke="#777" stroke-width="0.6"/><circle cx="8.5" cy="9.5" r="5" fill="#fff" stroke="#444" stroke-width="1"/><rect x="6.5" y="7.5" width="4" height="4" fill="#3c8fd0"/><path d="M12 13 L18 19.5" stroke="#444" stroke-width="1.2"/></svg>
<div class="t" style="left:1143.10px;top:60.57px;font-size:8.9px;color:#202020;transform:scaleX(0.849);transform-origin:0 0;-webkit-text-stroke:0.12px #202020;">Analyze</div>
<div class="t" style="left:1148.80px;top:72.07px;font-size:8.9px;color:#202020;transform:scaleX(0.829);transform-origin:0 0;-webkit-text-stroke:0.12px #202020;">Data</div>
<svg class="a" style="left:1178px;top:34.7px" width="20" height="20" viewBox="0 0 20 20"><defs>
<linearGradient id="cp1" x1="0" y1="0" x2="0" y2="1"><stop offset="0" stop-color="#2a8ff0"/><stop offset="0.5" stop-color="#38b58a"/><stop offset="1" stop-color="#d9d02a"/></linearGradient>
<linearGradient id="cp2" x1="0" y1="0" x2="0" y2="1"><stop offset="0" stop-color="#a456f0"/><stop offset="0.5" stop-color="#ee4f93"/><stop offset="1" stop-color="#f78a45"/></linearGradient></defs>
<path d="M4.5 1 H13 Q16 1 16.5 4.5 L17 7 H12 L10.3 12.5 Q9.7 14.6 7.5 14.6 H2.8 Q0.3 14.6 0.7 12 L2.2 3.5 Q2.7 1 4.5 1 Z" fill="url(#cp1)"/>
<path d="M12.5 1 H13.2 Q15.8 1 16.5 4.5 L17 7 H12 Z" fill="#2050d0"/>
<path d="M15.5 19.5 H7 Q4.2 19.5 3.8 16 L3.5 14.6 H8.2 L9.8 8.2 Q10.4 5.8 12.6 5.8 H17.3 Q19.8 5.8 19.3 8.5 L17.9 17 Q17.4 19.5 15.5 19.5 Z" fill="url(#cp2)" stroke="#fff" stroke-width="0.6"/>
<path d="M3.8 16 L3.5 14.6 H8.2 L7.2 18.6 Q5 19.5 3.8 16 Z" fill="#f05a28"/>
</svg>
<div class="t" style="left:1175.00px;top:60.07px;font-size:8.9px;color:#202020;transform:scaleX(0.920);transform-origin:0 0;-webkit-text-stroke:0.12px #202020;">Copilot</div>
<svg class="a" style="left:1223px;top:36px;" width="17.5" height="20.5" viewBox="0 0 17.5 20.5"><path d="M1 1 H10 L13.5 4.5 V9 M1 1 V17.5 H7" stroke="#6f72d8" stroke-width="1" fill="none"/><path d="M4 11 Q6 8 7 4 Q8 8 11 10 M4 11 L11 10" stroke="#6f72d8" stroke-width="0.9" fill="none"/><rect x="9" y="12" width="4" height="7" rx="2" transform="rotate(45 11 15.5)" stroke="#6f72d8" stroke-width="1" fill="none"/><rect x="12" y="9" width="4" height="7" rx="2" transform="rotate(45 14 12.5)" stroke="#6f72d8" stroke-width="1" fill="none"/></svg>
<div class="t" style="left:1218.00px;top:60.27px;font-size:8.9px;color:#202020;transform:scaleX(0.854);transform-origin:0 0;-webkit-text-stroke:0.12px #202020;">Create</div>
<div class="t" style="left:1219.80px;top:71.97px;font-size:8.9px;color:#202020;transform:scaleX(0.761);transform-origin:0 0;-webkit-text-stroke:0.12px #202020;">a PDF</div>
<div class="a" style="left:6.00px;top:107.00px;width:66.30px;height:17.10px;background:#fff;border:1px solid #e2e2e2;border-radius:4px"></div>
<div class="t" style="left:10.60px;top:111.71px;font-size:9.2px;color:#262626;transform:scaleX(0.728);transform-origin:0 0;">E1</div>
<svg class="a" style="left:62.0px;top:113.55px;" width="7" height="3.5" viewBox="0 0 7 3.5"><path d="M0.5 0.5 L3.5 3.3 L6.5 0.5" stroke="#333" stroke-width="1.1" fill="none"/></svg>
<div class="a" style="left:79.30px;top:113.20px;width:1.80px;height:1.60px;background:#555;border-radius:1px"></div>
<div class="a" style="left:79.30px;top:116.30px;width:1.80px;height:1.60px;background:#555;border-radius:1px"></div>
<div class="a" style="left:79.30px;top:119.40px;width:1.80px;height:1.60px;background:#555;border-radius:1px"></div>
<div class="a" style="left:87.50px;top:107.00px;width:55.60px;height:17.10px;background:#fff;border:1px solid #e2e2e2;border-radius:4px"></div>
<svg class="a" style="left:91.2px;top:111.6px;" width="8.5" height="8.5" viewBox="0 0 8.5 8.5"><path d="M0.5 0.5 L8 8 M8 0.5 L0.5 8" stroke="#b8b8b8" stroke-width="0.9"/></svg>
<svg class="a" style="left:106.2px;top:111.6px;" width="11" height="8.5" viewBox="0 0 11 8.5"><path d="M0.5 4.5 L3.8 8 L10.5 0.5" stroke="#b8b8b8" stroke-width="0.9" fill="none"/></svg>
<div class="t" style="left:123px;top:110px;font-family:'Liberation Serif',serif;font-style:italic;font-size:11.5px;color:#333;font-weight:bold;transform:scaleX(0.85);transform-origin:0 0">fx</div>
<svg class="a" style="left:136.25px;top:115.025px;" width="5.5" height="2.75" viewBox="0 0 5.5 2.75"><path d="M0.5 0.5 L2.75 2.55 L5.0 0.5" stroke="#888" stroke-width="1.15" fill="none"/></svg>
<div class="a" style="left:147.30px;top:107.00px;width:1127.70px;height:17.10px;background:#fff;border:1px solid #e2e2e2;border-radius:4px"></div>
<div class="t" style="left:154.20px;top:111.27px;font-size:9.6px;color:#262626;transform:scaleX(0.923);transform-origin:0 0;">Bonus (%)</div>
<svg class="a" style="left:1264.5px;top:113.75px;" width="7" height="3.5" viewBox="0 0 7 3.5"><path d="M0.5 0.5 L3.5 3.3 L6.5 0.5" stroke="#444" stroke-width="1.1" fill="none"/></svg>
<div class="a" style="left:0.00px;top:128.50px;width:1265.60px;height:15.70px;background:#efefef;"></div>
<div class="a" style="left:0.00px;top:144.20px;width:16.50px;height:535.39px;background:#ebebeb;"></div>
<div class="a" style="left:16.50px;top:144.20px;width:1249.10px;height:535.39px;background:#fff;"></div>
<div class="a" style="left:0.00px;top:158.17px;width:1265.60px;height:1.00px;background:#e6e6e6;"></div>
<div class="a" style="left:0.00px;top:172.64px;width:1265.60px;height:1.00px;background:#e6e6e6;"></div>
<div class="a" style="left:0.00px;top:187.11px;width:1265.60px;height:1.00px;background:#e6e6e6;"></div>
<div class="a" style="left:0.00px;top:201.58px;width:1265.60px;height:1.00px;background:#e6e6e6;"></div>
<div class="a" style="left:0.00px;top:216.05px;width:1265.60px;height:1.00px;background:#e6e6e6;"></div>
<div class="a" style="left:0.00px;top:230.52px;width:1265.60px;height:1.00px;background:#e6e6e6;"></div>
<div class="a" style="left:0.00px;top:244.99px;width:1265.60px;height:1.00px;background:#e6e6e6;"></div>
<div class="a" style="left:0.00px;top:259.46px;width:1265.60px;height:1.00px;background:#e6e6e6;"></div>
<div class="a" style="left:0.00px;top:273.93px;width:1265.60px;height:1.00px;background:#e6e6e6;"></div>
<div class="a" style="left:0.00px;top:288.40px;width:1265.60px;height:1.00px;background:#e6e6e6;"></div>
<div class="a" style="left:0.00px;top:302.87px;width:1265.60px;height:1.00px;background:#e6e6e6;"></div>
<div class="a" style="left:0.00px;top:317.34px;width:1265.60px;height:1.00px;background:#e6e6e6;"></div>
<div class="a" style="left:0.00px;top:331.81px;width:1265.60px;height:1.00px;background:#e6e6e6;"></div>
<div class="a" style="left:0.00px;top:346.28px;width:1265.60px;height:1.00px;background:#e6e6e6;"></div>
<div class="a" style="left:0.00px;top:360.75px;width:1265.60px;height:1.00px;background:#e6e6e6;"></div>
<div class="a" style="left:0.00px;top:375.22px;width:1265.60px;height:1.00px;background:#e6e6e6;"></div>
<div class="a" style="left:0.00px;top:389.69px;width:1265.60px;height:1.00px;background:#e6e6e6;"></div>
<div class="a" style="left:0.00px;top:404.16px;width:1265.60px;height:1.00px;background:#e6e6e6;"></div>
<div class="a" style="left:0.00px;top:418.63px;width:1265.60px;height:1.00px;background:#e6e6e6;"></div>
<div class="a" style="left:0.00px;top:433.10px;width:1265.60px;height:1.00px;background:#e6e6e6;"></div>
<div class="a" style="left:0.00px;top:447.57px;width:1265.60px;height:1.00px;background:#e6e6e6;"></div>
<div class="a" style="left:0.00px;top:462.04px;width:1265.60px;height:1.00px;background:#e6e6e6;"></div>
<div class="a" style="left:0.00px;top:476.51px;width:1265.60px;height:1.00px;background:#e6e6e6;"></div>
<div class="a" style="left:0.00px;top:490.98px;width:1265.60px;height:1.00px;background:#e6e6e6;"></div>
<div class="a" style="left:0.00px;top:505.45px;width:1265.60px;height:1.00px;background:#e6e6e6;"></div>
<div class="a" style="left:0.00px;top:519.92px;width:1265.60px;height:1.00px;background:#e6e6e6;"></div>
<div class="a" style="left:0.00px;top:534.39px;width:1265.60px;height:1.00px;background:#e6e6e6;"></div>
<div class="a" style="left:0.00px;top:548.86px;width:1265.60px;height:1.00px;background:#e6e6e6;"></div>
<div class="a" style="left:0.00px;top:563.33px;width:1265.60px;height:1.00px;background:#e6e6e6;"></div>
<div class="a" style="left:0.00px;top:577.80px;width:1265.60px;height:1.00px;background:#e6e6e6;"></div>
<div class="a" style="left:0.00px;top:592.27px;width:1265.60px;height:1.00px;background:#e6e6e6;"></div>
<div class="a" style="left:0.00px;top:606.74px;width:1265.60px;height:1.00px;background:#e6e6e6;"></div>
<div class="a" style="left:0.00px;top:621.21px;width:1265.60px;height:1.00px;background:#e6e6e6;"></div>
<div class="a" style="left:0.00px;top:635.68px;width:1265.60px;height:1.00px;background:#e6e6e6;"></div>
<div class="a" style="left:0.00px;top:650.15px;width:1265.60px;height:1.00px;background:#e6e6e6;"></div>
<div class="a" style="left:0.00px;top:664.62px;width:1265.60px;height:1.00px;background:#e6e6e6;"></div>
<div class="a" style="left:0.00px;top:143.60px;width:1265.60px;height:1.00px;background:#cfcfcf;"></div>
<div class="a" style="left:58.00px;top:130.50px;width:1.00px;height:13.70px;background:#dadada;"></div>
<div class="a" style="left:58.00px;top:144.20px;width:1.00px;height:535.39px;background:#e6e6e6;"></div>
<div class="a" style="left:262.60px;top:130.50px;width:1.00px;height:13.70px;background:#dadada;"></div>
<div class="a" style="left:262.60px;top:144.20px;width:1.00px;height:535.39px;background:#e6e6e6;"></div>
<div class="a" style="left:318.30px;top:130.50px;width:1.00px;height:13.70px;background:#dadada;"></div>
<div class="a" style="left:318.30px;top:144.20px;width:1.00px;height:535.39px;background:#e6e6e6;"></div>
<div class="a" style="left:347.10px;top:130.50px;width:1.00px;height:13.70px;background:#dadada;"></div>
<div class="a" style="left:347.10px;top:144.20px;width:1.00px;height:535.39px;background:#e6e6e6;"></div>
<div class="a" style="left:394.20px;top:130.50px;width:1.00px;height:13.70px;background:#dadada;"></div>
<div class="a" style="left:394.20px;top:144.20px;width:1.00px;height:535.39px;background:#e6e6e6;"></div>
<div class="a" style="left:436.88px;top:130.50px;width:1.00px;height:13.70px;background:#dadada;"></div>
<div class="a" style="left:436.88px;top:144.20px;width:1.00px;height:535.39px;background:#e6e6e6;"></div>
<div class="a" style="left:479.56px;top:130.50px;width:1.00px;height:13.70px;background:#dadada;"></div>
<div class="a" style="left:479.56px;top:144.20px;width:1.00px;height:535.39px;background:#e6e6e6;"></div>
<div class="a" style="left:522.24px;top:130.50px;width:1.00px;height:13.70px;background:#dadada;"></div>
<div class="a" style="left:522.24px;top:144.20px;width:1.00px;height:535.39px;background:#e6e6e6;"></div>
<div class="a" style="left:564.92px;top:130.50px;width:1.00px;height:13.70px;background:#dadada;"></div>
<div class="a" style="left:564.92px;top:144.20px;width:1.00px;height:535.39px;background:#e6e6e6;"></div>
<div class="a" style="left:607.60px;top:130.50px;width:1.00px;height:13.70px;background:#dadada;"></div>
<div class="a" style="left:607.60px;top:144.20px;width:1.00px;height:535.39px;background:#e6e6e6;"></div>
<div class="a" style="left:650.28px;top:130.50px;width:1.00px;height:13.70px;background:#dadada;"></div>
<div class="a" style="left:650.28px;top:144.20px;width:1.00px;height:535.39px;background:#e6e6e6;"></div>
<div class="a" style="left:692.96px;top:130.50px;width:1.00px;height:13.70px;background:#dadada;"></div>
<div class="a" style="left:692.96px;top:144.20px;width:1.00px;height:535.39px;background:#e6e6e6;"></div>
<div class="a" style="left:735.64px;top:130.50px;width:1.00px;height:13.70px;background:#dadada;"></div>
<div class="a" style="left:735.64px;top:144.20px;width:1.00px;height:535.39px;background:#e6e6e6;"></div>
<div class="a" style="left:778.32px;top:130.50px;width:1.00px;height:13.70px;background:#dadada;"></div>
<div class="a" style="left:778.32px;top:144.20px;width:1.00px;height:535.39px;background:#e6e6e6;"></div>
<div class="a" style="left:821.00px;top:130.50px;width:1.00px;height:13.70px;background:#dadada;"></div>
<div class="a" style="left:821.00px;top:144.20px;width:1.00px;height:535.39px;background:#e6e6e6;"></div>
<div class="a" style="left:863.68px;top:130.50px;width:1.00px;height:13.70px;background:#dadada;"></div>
<div class="a" style="left:863.68px;top:144.20px;width:1.00px;height:535.39px;background:#e6e6e6;"></div>
<div class="a" style="left:906.36px;top:130.50px;width:1.00px;height:13.70px;background:#dadada;"></div>
<div class="a" style="left:906.36px;top:144.20px;width:1.00px;height:535.39px;background:#e6e6e6;"></div>
<div class="a" style="left:949.04px;top:130.50px;width:1.00px;height:13.70px;background:#dadada;"></div>
<div class="a" style="left:949.04px;top:144.20px;width:1.00px;height:535.39px;background:#e6e6e6;"></div>
<div class="a" style="left:991.72px;top:130.50px;width:1.00px;height:13.70px;background:#dadada;"></div>
<div class="a" style="left:991.72px;top:144.20px;width:1.00px;height:535.39px;background:#e6e6e6;"></div>
<div class="a" style="left:1034.40px;top:130.50px;width:1.00px;height:13.70px;background:#dadada;"></div>
<div class="a" style="left:1034.40px;top:144.20px;width:1.00px;height:535.39px;background:#e6e6e6;"></div>
<div class="a" style="left:1077.08px;top:130.50px;width:1.00px;height:13.70px;background:#dadada;"></div>
<div class="a" style="left:1077.08px;top:144.20px;width:1.00px;height:535.39px;background:#e6e6e6;"></div>
<div class="a" style="left:1119.76px;top:130.50px;width:1.00px;height:13.70px;background:#dadada;"></div>
<div class="a" style="left:1119.76px;top:144.20px;width:1.00px;height:535.39px;background:#e6e6e6;"></div>
<div class="a" style="left:1162.44px;top:130.50px;width:1.00px;height:13.70px;background:#dadada;"></div>
<div class="a" style="left:1162.44px;top:144.20px;width:1.00px;height:535.39px;background:#e6e6e6;"></div>
<div class="a" style="left:1205.12px;top:130.50px;width:1.00px;height:13.70px;background:#dadada;"></div>
<div class="a" style="left:1205.12px;top:144.20px;width:1.00px;height:535.39px;background:#e6e6e6;"></div>
<div class="a" style="left:1247.80px;top:130.50px;width:1.00px;height:13.70px;background:#dadada;"></div>
<div class="a" style="left:1247.80px;top:144.20px;width:1.00px;height:535.39px;background:#e6e6e6;"></div>
<div class="a" style="left:16.00px;top:130.50px;width:1.00px;height:13.70px;background:#dadada;"></div>
<div class="t" style="left:34.80px;top:132.95px;font-size:8.8px;color:#555;transform:scaleX(1.000);transform-origin:0 0;">A</div>
<div class="t" style="left:157.87px;top:132.95px;font-size:8.8px;color:#555;transform:scaleX(1.000);transform-origin:0 0;">B</div>
<div class="t" style="left:287.78px;top:132.95px;font-size:8.8px;color:#555;transform:scaleX(1.000);transform-origin:0 0;">C</div>
<div class="t" style="left:330.03px;top:132.95px;font-size:8.8px;color:#555;transform:scaleX(1.000);transform-origin:0 0;">D</div>
<div class="t" style="left:412.61px;top:132.95px;font-size:8.8px;color:#555;transform:scaleX(1.000);transform-origin:0 0;">G</div>
<div class="t" style="left:455.55px;top:132.95px;font-size:8.8px;color:#555;transform:scaleX(1.000);transform-origin:0 0;">H</div>
<div class="t" style="left:500.17px;top:132.95px;font-size:8.8px;color:#555;transform:scaleX(1.000);transform-origin:0 0;">I</div>
<div class="t" style="left:541.88px;top:132.95px;font-size:8.8px;color:#555;transform:scaleX(1.000);transform-origin:0 0;">J</div>
<div class="t" style="left:583.83px;top:132.95px;font-size:8.8px;color:#555;transform:scaleX(1.000);transform-origin:0 0;">K</div>
<div class="t" style="left:627.00px;top:132.95px;font-size:8.8px;color:#555;transform:scaleX(1.000);transform-origin:0 0;">L</div>
<div class="t" style="left:668.45px;top:132.95px;font-size:8.8px;color:#555;transform:scaleX(1.000);transform-origin:0 0;">M</div>
<div class="t" style="left:711.63px;top:132.95px;font-size:8.8px;color:#555;transform:scaleX(1.000);transform-origin:0 0;">N</div>
<div class="t" style="left:754.05px;top:132.95px;font-size:8.8px;color:#555;transform:scaleX(1.000);transform-origin:0 0;">O</div>
<div class="t" style="left:797.23px;top:132.95px;font-size:8.8px;color:#555;transform:scaleX(1.000);transform-origin:0 0;">P</div>
<div class="t" style="left:839.41px;top:132.95px;font-size:8.8px;color:#555;transform:scaleX(1.000);transform-origin:0 0;">Q</div>
<div class="t" style="left:882.35px;top:132.95px;font-size:8.8px;color:#555;transform:scaleX(1.000);transform-origin:0 0;">R</div>
<div class="t" style="left:925.27px;top:132.95px;font-size:8.8px;color:#555;transform:scaleX(1.000);transform-origin:0 0;">S</div>
<div class="t" style="left:968.20px;top:132.95px;font-size:8.8px;color:#555;transform:scaleX(1.000);transform-origin:0 0;">T</div>
<div class="t" style="left:1010.39px;top:132.95px;font-size:8.8px;color:#555;transform:scaleX(1.000);transform-origin:0 0;">U</div>
<div class="t" style="left:1053.31px;top:132.95px;font-size:8.8px;color:#555;transform:scaleX(1.000);transform-origin:0 0;">V</div>
<div class="t" style="left:1094.76px;top:132.95px;font-size:8.8px;color:#555;transform:scaleX(1.000);transform-origin:0 0;">W</div>
<div class="t" style="left:1138.67px;top:132.95px;font-size:8.8px;color:#555;transform:scaleX(1.000);transform-origin:0 0;">X</div>
<div class="t" style="left:1181.35px;top:132.95px;font-size:8.8px;color:#555;transform:scaleX(1.000);transform-origin:0 0;">Y</div>
<div class="t" style="left:1224.28px;top:132.95px;font-size:8.8px;color:#555;transform:scaleX(1.000);transform-origin:0 0;">Z</div>
<div class="t" style="left:6.40px;top:147.27px;font-size:9.6px;color:#3f6b50;transform:scaleX(0.900);transform-origin:0 0;-webkit-text-stroke:0.1px #3f6b50;">1</div>
<div class="t" style="left:6.40px;top:161.74px;font-size:9.6px;color:#3f6b50;transform:scaleX(0.900);transform-origin:0 0;-webkit-text-stroke:0.1px #3f6b50;">2</div>
<div class="t" style="left:6.40px;top:176.21px;font-size:9.6px;color:#3f6b50;transform:scaleX(0.900);transform-origin:0 0;-webkit-text-stroke:0.1px #3f6b50;">3</div>
<div class="t" style="left:6.40px;top:190.68px;font-size:9.6px;color:#3f6b50;transform:scaleX(0.900);transform-origin:0 0;-webkit-text-stroke:0.1px #3f6b50;">4</div>
<div class="t" style="left:6.40px;top:205.15px;font-size:9.6px;color:#3f6b50;transform:scaleX(0.900);transform-origin:0 0;-webkit-text-stroke:0.1px #3f6b50;">5</div>
<div class="t" style="left:6.40px;top:219.62px;font-size:9.6px;color:#3f6b50;transform:scaleX(0.900);transform-origin:0 0;-webkit-text-stroke:0.1px #3f6b50;">6</div>
<div class="t" style="left:6.40px;top:234.09px;font-size:9.6px;color:#3f6b50;transform:scaleX(0.900);transform-origin:0 0;-webkit-text-stroke:0.1px #3f6b50;">7</div>
<div class="t" style="left:6.40px;top:248.56px;font-size:9.6px;color:#3f6b50;transform:scaleX(0.900);transform-origin:0 0;-webkit-text-stroke:0.1px #3f6b50;">8</div>
<div class="t" style="left:6.40px;top:263.03px;font-size:9.6px;color:#3f6b50;transform:scaleX(0.900);transform-origin:0 0;-webkit-text-stroke:0.1px #3f6b50;">9</div>
<div class="t" style="left:4.00px;top:277.50px;font-size:9.6px;color:#3f6b50;transform:scaleX(0.900);transform-origin:0 0;-webkit-text-stroke:0.1px #3f6b50;">10</div>
<div class="t" style="left:4.31px;top:291.97px;font-size:9.6px;color:#3f6b50;transform:scaleX(0.900);transform-origin:0 0;-webkit-text-stroke:0.1px #3f6b50;">11</div>
<div class="t" style="left:4.00px;top:306.44px;font-size:9.6px;color:#3f6b50;transform:scaleX(0.900);transform-origin:0 0;-webkit-text-stroke:0.1px #3f6b50;">12</div>
<div class="t" style="left:4.00px;top:320.91px;font-size:9.6px;color:#3f6b50;transform:scaleX(0.900);transform-origin:0 0;-webkit-text-stroke:0.1px #3f6b50;">13</div>
<div class="t" style="left:4.00px;top:335.38px;font-size:9.6px;color:#3f6b50;transform:scaleX(0.900);transform-origin:0 0;-webkit-text-stroke:0.1px #3f6b50;">14</div>
<div class="t" style="left:4.00px;top:349.85px;font-size:9.6px;color:#3f6b50;transform:scaleX(0.900);transform-origin:0 0;-webkit-text-stroke:0.1px #3f6b50;">15</div>
<div class="t" style="left:4.00px;top:364.32px;font-size:9.6px;color:#3f6b50;transform:scaleX(0.900);transform-origin:0 0;-webkit-text-stroke:0.1px #3f6b50;">16</div>
<div class="t" style="left:4.00px;top:378.79px;font-size:9.6px;color:#3f6b50;transform:scaleX(0.900);transform-origin:0 0;-webkit-text-stroke:0.1px #3f6b50;">17</div>
<div class="t" style="left:4.00px;top:393.26px;font-size:9.6px;color:#3f6b50;transform:scaleX(0.900);transform-origin:0 0;-webkit-text-stroke:0.1px #3f6b50;">18</div>
<div class="t" style="left:4.00px;top:407.73px;font-size:9.6px;color:#3f6b50;transform:scaleX(0.900);transform-origin:0 0;-webkit-text-stroke:0.1px #3f6b50;">19</div>
<div class="t" style="left:4.00px;top:422.20px;font-size:9.6px;color:#3f6b50;transform:scaleX(0.900);transform-origin:0 0;-webkit-text-stroke:0.1px #3f6b50;">20</div>
<div class="t" style="left:4.00px;top:436.67px;font-size:9.6px;color:#3f6b50;transform:scaleX(0.900);transform-origin:0 0;-webkit-text-stroke:0.1px #3f6b50;">21</div>
<div class="t" style="left:4.00px;top:451.14px;font-size:9.6px;color:#3f6b50;transform:scaleX(0.900);transform-origin:0 0;-webkit-text-stroke:0.1px #3f6b50;">22</div>
<div class="t" style="left:4.00px;top:465.61px;font-size:9.6px;color:#3f6b50;transform:scaleX(0.900);transform-origin:0 0;-webkit-text-stroke:0.1px #3f6b50;">23</div>
<div class="t" style="left:4.00px;top:480.08px;font-size:9.6px;color:#3f6b50;transform:scaleX(0.900);transform-origin:0 0;-webkit-text-stroke:0.1px #3f6b50;">24</div>
<div class="t" style="left:4.00px;top:494.55px;font-size:9.6px;color:#3f6b50;transform:scaleX(0.900);transform-origin:0 0;-webkit-text-stroke:0.1px #3f6b50;">25</div>
<div class="t" style="left:4.00px;top:509.02px;font-size:9.6px;color:#3f6b50;transform:scaleX(0.900);transform-origin:0 0;-webkit-text-stroke:0.1px #3f6b50;">26</div>
<div class="t" style="left:4.00px;top:523.49px;font-size:9.6px;color:#3f6b50;transform:scaleX(0.900);transform-origin:0 0;-webkit-text-stroke:0.1px #3f6b50;">27</div>
<div class="t" style="left:4.00px;top:537.96px;font-size:9.6px;color:#3f6b50;transform:scaleX(0.900);transform-origin:0 0;-webkit-text-stroke:0.1px #3f6b50;">28</div>
<div class="t" style="left:4.00px;top:552.43px;font-size:9.6px;color:#3f6b50;transform:scaleX(0.900);transform-origin:0 0;-webkit-text-stroke:0.1px #3f6b50;">29</div>
<div class="t" style="left:4.00px;top:566.90px;font-size:9.6px;color:#3f6b50;transform:scaleX(0.900);transform-origin:0 0;-webkit-text-stroke:0.1px #3f6b50;">30</div>
<div class="t" style="left:4.00px;top:581.37px;font-size:9.6px;color:#3f6b50;transform:scaleX(0.900);transform-origin:0 0;-webkit-text-stroke:0.1px #3f6b50;">31</div>
<div class="t" style="left:4.00px;top:595.84px;font-size:9.6px;color:#3f6b50;transform:scaleX(0.900);transform-origin:0 0;-webkit-text-stroke:0.1px #3f6b50;">32</div>
<div class="t" style="left:4.00px;top:610.31px;font-size:9.6px;color:#3f6b50;transform:scaleX(0.900);transform-origin:0 0;-webkit-text-stroke:0.1px #3f6b50;">33</div>
<div class="t" style="left:4.00px;top:624.78px;font-size:9.6px;color:#3f6b50;transform:scaleX(0.900);transform-origin:0 0;-webkit-text-stroke:0.1px #3f6b50;">34</div>
<div class="t" style="left:4.00px;top:639.25px;font-size:9.6px;color:#3f6b50;transform:scaleX(0.900);transform-origin:0 0;-webkit-text-stroke:0.1px #3f6b50;">35</div>
<div class="t" style="left:4.00px;top:653.72px;font-size:9.6px;color:#3f6b50;transform:scaleX(0.900);transform-origin:0 0;-webkit-text-stroke:0.1px #3f6b50;">36</div>
<div class="t" style="left:4.00px;top:668.19px;font-size:9.6px;color:#3f6b50;transform:scaleX(0.900);transform-origin:0 0;-webkit-text-stroke:0.1px #3f6b50;">37</div>
<div class="a" style="left:15.90px;top:144.20px;width:1.50px;height:535.39px;background:#2f7049;"></div>
<svg class="a" style="left:7.5px;top:133.5px;" width="8" height="8.5" viewBox="0 0 8 8.5"><path d="M7.5 0.5 V8 H0.5 Z" fill="#dadada"/></svg>
<div class="a" style="left:17.00px;top:157.37px;width:330.60px;height:1.80px;background:#555;"></div>
<div class="a" style="left:57.70px;top:144.20px;width:1.60px;height:14.47px;background:#777;"></div>
<div class="a" style="left:262.30px;top:144.20px;width:1.60px;height:14.47px;background:#777;"></div>
<div class="a" style="left:318.00px;top:144.20px;width:1.60px;height:14.47px;background:#777;"></div>
<div class="t" style="left:33.34px;top:147.77px;font-size:10.2px;font-weight:bold;color:#1e1e1e;transform:scaleX(0.864);transform-origin:0 0;-webkit-text-stroke:0.12px #1e1e1e">ID</div>
<div class="t" style="left:148.79px;top:147.77px;font-size:10.2px;font-weight:bold;color:#1e1e1e;transform:scaleX(0.864);transform-origin:0 0;-webkit-text-stroke:0.12px #1e1e1e">Name</div>
<div class="t" style="left:265.40px;top:147.77px;font-size:10.2px;font-weight:bold;color:#1e1e1e;transform:scaleX(0.894);transform-origin:0 0;-webkit-text-stroke:0.12px #1e1e1e">Department</div>
<div class="t" style="left:320.80px;top:147.77px;font-size:10.2px;font-weight:bold;color:#1e1e1e;transform:scaleX(0.864);transform-origin:0 0;-webkit-text-stroke:0.12px #1e1e1e">Salary</div>
<div class="t" style="left:44.23px;top:162.24px;font-size:10.2px;color:#1e1e1e;transform:scaleX(0.744);transform-origin:0 0;-webkit-text-stroke:0.12px #1e1e1e">101</div>
<div class="t" style="left:60.10px;top:162.24px;font-size:10.2px;color:#1e1e1e;transform:scaleX(0.904);transform-origin:0 0;-webkit-text-stroke:0.12px #1e1e1e">Alice</div>
<div class="t" style="left:264.70px;top:162.24px;font-size:10.2px;color:#1e1e1e;transform:scaleX(0.904);transform-origin:0 0;-webkit-text-stroke:0.12px #1e1e1e">HR</div>
<div class="t" style="left:322.50px;top:162.24px;font-size:10.2px;color:#1e1e1e;transform:scaleX(0.744);transform-origin:0 0;-webkit-text-stroke:0.12px #1e1e1e">50000</div>
<div class="t" style="left:44.23px;top:176.71px;font-size:10.2px;color:#1e1e1e;transform:scaleX(0.744);transform-origin:0 0;-webkit-text-stroke:0.12px #1e1e1e">102</div>
<div class="t" style="left:60.10px;top:176.71px;font-size:10.2px;color:#1e1e1e;transform:scaleX(0.904);transform-origin:0 0;-webkit-text-stroke:0.12px #1e1e1e">Bob</div>
<div class="t" style="left:264.70px;top:176.71px;font-size:10.2px;color:#1e1e1e;transform:scaleX(0.904);transform-origin:0 0;-webkit-text-stroke:0.12px #1e1e1e">IT</div>
<div class="t" style="left:322.50px;top:176.71px;font-size:10.2px;color:#1e1e1e;transform:scaleX(0.744);transform-origin:0 0;-webkit-text-stroke:0.12px #1e1e1e">60000</div>
<div class="t" style="left:44.23px;top:191.18px;font-size:10.2px;color:#1e1e1e;transform:scaleX(0.744);transform-origin:0 0;-webkit-text-stroke:0.12px #1e1e1e">103</div>
<div class="t" style="left:60.10px;top:191.18px;font-size:10.2px;color:#1e1e1e;transform:scaleX(0.904);transform-origin:0 0;-webkit-text-stroke:0.12px #1e1e1e">Charlie</div>
<div class="t" style="left:264.70px;top:191.18px;font-size:10.2px;color:#1e1e1e;transform:scaleX(0.904);transform-origin:0 0;-webkit-text-stroke:0.12px #1e1e1e">Finance</div>
<div class="t" style="left:322.50px;top:191.18px;font-size:10.2px;color:#1e1e1e;transform:scaleX(0.744);transform-origin:0 0;-webkit-text-stroke:0.12px #1e1e1e">55000</div>
<div class="t" style="left:44.23px;top:205.65px;font-size:10.2px;color:#1e1e1e;transform:scaleX(0.744);transform-origin:0 0;-webkit-text-stroke:0.12px #1e1e1e">104</div>
<div class="t" style="left:60.10px;top:205.65px;font-size:10.2px;color:#1e1e1e;transform:scaleX(0.904);transform-origin:0 0;-webkit-text-stroke:0.12px #1e1e1e">David</div>
<div class="t" style="left:264.70px;top:205.65px;font-size:10.2px;color:#1e1e1e;transform:scaleX(0.904);transform-origin:0 0;-webkit-text-stroke:0.12px #1e1e1e">IT</div>
<div class="t" style="left:322.50px;top:205.65px;font-size:10.2px;color:#1e1e1e;transform:scaleX(0.744);transform-origin:0 0;-webkit-text-stroke:0.12px #1e1e1e">62000</div>
<div class="t" style="left:44.23px;top:220.12px;font-size:10.2px;color:#1e1e1e;transform:scaleX(0.744);transform-origin:0 0;-webkit-text-stroke:0.12px #1e1e1e">105</div>
<div class="t" style="left:60.10px;top:220.12px;font-size:10.2px;color:#1e1e1e;transform:scaleX(0.904);transform-origin:0 0;-webkit-text-stroke:0.12px #1e1e1e">Emma</div>
<div class="t" style="left:264.70px;top:220.12px;font-size:10.2px;color:#1e1e1e;transform:scaleX(0.904);transform-origin:0 0;-webkit-text-stroke:0.12px #1e1e1e">HR</div>
<div class="t" style="left:322.50px;top:220.12px;font-size:10.2px;color:#1e1e1e;transform:scaleX(0.744);transform-origin:0 0;-webkit-text-stroke:0.12px #1e1e1e">51000</div>
<div class="t" style="left:60.10px;top:234.59px;font-size:10.2px;color:#1e1e1e;transform:scaleX(0.904);transform-origin:0 0;-webkit-text-stroke:0.12px #1e1e1e">This row is for internal notes and can be hidden</div>
<div class="t" style="left:44.23px;top:249.06px;font-size:10.2px;color:#1e1e1e;transform:scaleX(0.744);transform-origin:0 0;-webkit-text-stroke:0.12px #1e1e1e">106</div>
<div class="t" style="left:60.10px;top:249.06px;font-size:10.2px;color:#1e1e1e;transform:scaleX(0.904);transform-origin:0 0;-webkit-text-stroke:0.12px #1e1e1e">Frank</div>
<div class="t" style="left:264.70px;top:249.06px;font-size:10.2px;color:#1e1e1e;transform:scaleX(0.904);transform-origin:0 0;-webkit-text-stroke:0.12px #1e1e1e">Finance</div>
<div class="t" style="left:322.50px;top:249.06px;font-size:10.2px;color:#1e1e1e;transform:scaleX(0.744);transform-origin:0 0;-webkit-text-stroke:0.12px #1e1e1e">58000</div>
<div class="t" style="left:44.23px;top:263.53px;font-size:10.2px;color:#1e1e1e;transform:scaleX(0.744);transform-origin:0 0;-webkit-text-stroke:0.12px #1e1e1e">107</div>
<div class="t" style="left:60.10px;top:263.53px;font-size:10.2px;color:#1e1e1e;transform:scaleX(0.904);transform-origin:0 0;-webkit-text-stroke:0.12px #1e1e1e">Grace</div>
<div class="t" style="left:264.70px;top:263.53px;font-size:10.2px;color:#1e1e1e;transform:scaleX(0.904);transform-origin:0 0;-webkit-text-stroke:0.12px #1e1e1e">IT</div>
<div class="t" style="left:322.50px;top:263.53px;font-size:10.2px;color:#1e1e1e;transform:scaleX(0.744);transform-origin:0 0;-webkit-text-stroke:0.12px #1e1e1e">61000</div>
<div class="t" style="left:44.23px;top:278.00px;font-size:10.2px;color:#1e1e1e;transform:scaleX(0.744);transform-origin:0 0;-webkit-text-stroke:0.12px #1e1e1e">108</div>
<div class="t" style="left:60.10px;top:278.00px;font-size:10.2px;color:#1e1e1e;transform:scaleX(0.904);transform-origin:0 0;-webkit-text-stroke:0.12px #1e1e1e">Hannah</div>
<div class="t" style="left:264.70px;top:278.00px;font-size:10.2px;color:#1e1e1e;transform:scaleX(0.904);transform-origin:0 0;-webkit-text-stroke:0.12px #1e1e1e">HR</div>
<div class="t" style="left:322.50px;top:278.00px;font-size:10.2px;color:#1e1e1e;transform:scaleX(0.744);transform-origin:0 0;-webkit-text-stroke:0.12px #1e1e1e">53000</div>
<div class="t" style="left:44.23px;top:292.47px;font-size:10.2px;color:#1e1e1e;transform:scaleX(0.744);transform-origin:0 0;-webkit-text-stroke:0.12px #1e1e1e">109</div>
<div class="t" style="left:60.10px;top:292.47px;font-size:10.2px;color:#1e1e1e;transform:scaleX(0.904);transform-origin:0 0;-webkit-text-stroke:0.12px #1e1e1e">Ian</div>
<div class="t" style="left:264.70px;top:292.47px;font-size:10.2px;color:#1e1e1e;transform:scaleX(0.904);transform-origin:0 0;-webkit-text-stroke:0.12px #1e1e1e">Finance</div>
<div class="t" style="left:322.50px;top:292.47px;font-size:10.2px;color:#1e1e1e;transform:scaleX(0.744);transform-origin:0 0;-webkit-text-stroke:0.12px #1e1e1e">57000</div>
<div class="t" style="left:44.80px;top:306.94px;font-size:10.2px;color:#1e1e1e;transform:scaleX(0.744);transform-origin:0 0;-webkit-text-stroke:0.12px #1e1e1e">110</div>
<div class="t" style="left:60.10px;top:306.94px;font-size:10.2px;color:#1e1e1e;transform:scaleX(0.904);transform-origin:0 0;-webkit-text-stroke:0.12px #1e1e1e">Jack</div>
<div class="t" style="left:264.70px;top:306.94px;font-size:10.2px;color:#1e1e1e;transform:scaleX(0.904);transform-origin:0 0;-webkit-text-stroke:0.12px #1e1e1e">IT</div>
<div class="t" style="left:322.50px;top:306.94px;font-size:10.2px;color:#1e1e1e;transform:scaleX(0.744);transform-origin:0 0;-webkit-text-stroke:0.12px #1e1e1e">59000</div>
<div class="a" style="left:348.30px;top:129.50px;width:45.90px;height:14.70px;background:#d3eadb;"></div>
<div class="a" style="left:348.30px;top:142.60px;width:45.90px;height:1.60px;background:#2f7049;"></div>
<div class="t" style="left:368.40px;top:132.95px;font-size:8.8px;color:#235c3a;transform:scaleX(1.025);transform-origin:0 0;">E</div>
<div class="a" style="left:349.20px;top:158.67px;width:45.00px;height:520.92px;background:#c6c6c6;"></div>
<div class="a" style="left:349.20px;top:172.64px;width:45.00px;height:1.00px;background:#b8b8b8;"></div>
<div class="a" style="left:349.20px;top:187.11px;width:45.00px;height:1.00px;background:#b8b8b8;"></div>
<div class="a" style="left:349.20px;top:201.58px;width:45.00px;height:1.00px;background:#b8b8b8;"></div>
<div class="a" style="left:349.20px;top:216.05px;width:45.00px;height:1.00px;background:#b8b8b8;"></div>
<div class="a" style="left:349.20px;top:230.52px;width:45.00px;height:1.00px;background:#b8b8b8;"></div>
<div class="a" style="left:349.20px;top:244.99px;width:45.00px;height:1.00px;background:#b8b8b8;"></div>
<div class="a" style="left:349.20px;top:259.46px;width:45.00px;height:1.00px;background:#b8b8b8;"></div>
<div class="a" style="left:349.20px;top:273.93px;width:45.00px;height:1.00px;background:#b8b8b8;"></div>
<div class="a" style="left:349.20px;top:288.40px;width:45.00px;height:1.00px;background:#b8b8b8;"></div>
<div class="a" style="left:349.20px;top:302.87px;width:45.00px;height:1.00px;background:#b8b8b8;"></div>
<div class="a" style="left:349.20px;top:317.34px;width:45.00px;height:1.00px;background:#b8b8b8;"></div>
<div class="a" style="left:349.20px;top:331.81px;width:45.00px;height:1.00px;background:#b8b8b8;"></div>
<div class="a" style="left:349.20px;top:346.28px;width:45.00px;height:1.00px;background:#b8b8b8;"></div>
<div class="a" style="left:349.20px;top:360.75px;width:45.00px;height:1.00px;background:#b8b8b8;"></div>
<div class="a" style="left:349.20px;top:375.22px;width:45.00px;height:1.00px;background:#b8b8b8;"></div>
<div class="a" style="left:349.20px;top:389.69px;width:45.00px;height:1.00px;background:#b8b8b8;"></div>
<div class="a" style="left:349.20px;top:404.16px;width:45.00px;height:1.00px;background:#b8b8b8;"></div>
<div class="a" style="left:349.20px;top:418.63px;width:45.00px;height:1.00px;background:#b8b8b8;"></div>
<div class="a" style="left:349.20px;top:433.10px;width:45.00px;height:1.00px;background:#b8b8b8;"></div>
<div class="a" style="left:349.20px;top:447.57px;width:45.00px;height:1.00px;background:#b8b8b8;"></div>
<div class="a" style="left:349.20px;top:462.04px;width:45.00px;height:1.00px;background:#b8b8b8;"></div>
<div class="a" style="left:349.20px;top:476.51px;width:45.00px;height:1.00px;background:#b8b8b8;"></div>
<div class="a" style="left:349.20px;top:490.98px;width:45.00px;height:1.00px;background:#b8b8b8;"></div>
<div class="a" style="left:349.20px;top:505.45px;width:45.00px;height:1.00px;background:#b8b8b8;"></div>
<div class="a" style="left:349.20px;top:519.92px;width:45.00px;height:1.00px;background:#b8b8b8;"></div>
<div class="a" style="left:349.20px;top:534.39px;width:45.00px;height:1.00px;background:#b8b8b8;"></div>
<div class="a" style="left:349.20px;top:548.86px;width:45.00px;height:1.00px;background:#b8b8b8;"></div>
<div class="a" style="left:349.20px;top:563.33px;width:45.00px;height:1.00px;background:#b8b8b8;"></div>
<div class="a" style="left:349.20px;top:577.80px;width:45.00px;height:1.00px;background:#b8b8b8;"></div>
<div class="a" style="left:349.20px;top:592.27px;width:45.00px;height:1.00px;background:#b8b8b8;"></div>
<div class="a" style="left:349.20px;top:606.74px;width:45.00px;height:1.00px;background:#b8b8b8;"></div>
<div class="a" style="left:349.20px;top:621.21px;width:45.00px;height:1.00px;background:#b8b8b8;"></div>
<div class="a" style="left:349.20px;top:635.68px;width:45.00px;height:1.00px;background:#b8b8b8;"></div>
<div class="a" style="left:349.20px;top:650.15px;width:45.00px;height:1.00px;background:#b8b8b8;"></div>
<div class="a" style="left:349.20px;top:664.62px;width:45.00px;height:1.00px;background:#b8b8b8;"></div>
<div class="a" style="left:347.20px;top:144.20px;width:2.00px;height:535.39px;background:#2f7049;"></div>
<div class="a" style="left:394.60px;top:144.20px;width:1.50px;height:535.39px;background:#3d7d57;"></div>
<div class="a" style="left:393.30px;top:143.90px;width:3.50px;height:3.50px;background:#2f7049;"></div>
<div class="t" style="left:349.91px;top:147.77px;font-size:10.2px;font-weight:bold;color:#1e1e1e;transform:scaleX(0.864);transform-origin:0 0;-webkit-text-stroke:0.12px #1e1e1e">Bonus (%)</div>
<div class="t" style="left:387.79px;top:162.24px;font-size:10.2px;color:#1e1e1e;transform:scaleX(0.744);transform-origin:0 0;-webkit-text-stroke:0.12px #1e1e1e">5</div>
<div class="t" style="left:387.79px;top:176.71px;font-size:10.2px;color:#1e1e1e;transform:scaleX(0.744);transform-origin:0 0;-webkit-text-stroke:0.12px #1e1e1e">7</div>
<div class="t" style="left:387.79px;top:191.18px;font-size:10.2px;color:#1e1e1e;transform:scaleX(0.744);transform-origin:0 0;-webkit-text-stroke:0.12px #1e1e1e">6</div>
<div class="t" style="left:387.79px;top:205.65px;font-size:10.2px;color:#1e1e1e;transform:scaleX(0.744);transform-origin:0 0;-webkit-text-stroke:0.12px #1e1e1e">7</div>
<div class="t" style="left:387.79px;top:220.12px;font-size:10.2px;color:#1e1e1e;transform:scaleX(0.744);transform-origin:0 0;-webkit-text-stroke:0.12px #1e1e1e">5</div>
<div class="t" style="left:387.79px;top:249.06px;font-size:10.2px;color:#1e1e1e;transform:scaleX(0.744);transform-origin:0 0;-webkit-text-stroke:0.12px #1e1e1e">6</div>
<div class="t" style="left:387.79px;top:263.53px;font-size:10.2px;color:#1e1e1e;transform:scaleX(0.744);transform-origin:0 0;-webkit-text-stroke:0.12px #1e1e1e">7</div>
<div class="t" style="left:387.79px;top:278.00px;font-size:10.2px;color:#1e1e1e;transform:scaleX(0.744);transform-origin:0 0;-webkit-text-stroke:0.12px #1e1e1e">5</div>
<div class="t" style="left:387.79px;top:292.47px;font-size:10.2px;color:#1e1e1e;transform:scaleX(0.744);transform-origin:0 0;-webkit-text-stroke:0.12px #1e1e1e">6</div>
<div class="t" style="left:387.79px;top:306.94px;font-size:10.2px;color:#1e1e1e;transform:scaleX(0.744);transform-origin:0 0;-webkit-text-stroke:0.12px #1e1e1e">7</div>
<div class="a" style="left:0.00px;top:679.60px;width:1280.00px;height:22.70px;background:#e9ebef;"></div>
<div class="a" style="left:0.00px;top:702.30px;width:1280.00px;height:15.30px;background:#f3f3f3;"></div>
<div class="a" style="left:0.00px;top:717.60px;width:1280.00px;height:2.40px;background:#dde0e6;"></div>
<svg class="a" style="left:18.5px;top:687.5px;" width="5" height="7" viewBox="0 0 5 7"><path d="M4.5 0.5 L1 3.5 L4.5 6.5" stroke="#9a9a9a" stroke-width="0.9" fill="none"/></svg>
<svg class="a" style="left:40.8px;top:687.5px;" width="5" height="7" viewBox="0 0 5 7"><path d="M0.5 0.5 L4 3.5 L0.5 6.5" stroke="#9a9a9a" stroke-width="0.9" fill="none"/></svg>
<div class="a" style="left:77.30px;top:679.60px;width:38.30px;height:19.80px;background:#fff;border-radius:0 0 4px 4px"></div>
<div class="t" style="left:82.80px;top:684.61px;font-size:9.2px;font-weight:bold;color:#262626;transform:scaleX(0.908);transform-origin:0 0;">Sheet1</div>
<div class="a" style="left:82.80px;top:695.50px;width:27.40px;height:1.70px;background:#1e6e42;border-radius:1px"></div>
<div class="a" style="left:118.30px;top:686.00px;width:0.90px;height:10.00px;background:#d0d0d0;"></div>
<svg class="a" style="left:146.5px;top:687.5px;" width="8" height="8" viewBox="0 0 8 8"><path d="M4 0 V7 M0.5 3.5 H7.5" stroke="#444" stroke-width="0.9"/></svg>
<div class="t" style="left:7.50px;top:707.02px;font-size:8.6px;color:#262626;transform:scaleX(0.829);transform-origin:0 0;">Ready</div>
<svg class="a" style="left:41.3px;top:705.8px;" width="10" height="9.5" viewBox="0 0 10 9.5"><rect x="0.5" y="0.5" width="9" height="8.5" fill="#fff" stroke="#555" stroke-width="0.9"/><rect x="0.5" y="0.5" width="9" height="2" fill="#555"/><circle cx="6" cy="6" r="2.3" fill="#fff" stroke="#444" stroke-width="0.9"/><circle cx="6" cy="6" r="1" fill="#444"/></svg>
<svg class="a" style="left:62.5px;top:705px;" width="10.5" height="11" viewBox="0 0 10.5 11"><circle cx="3" cy="1.6" r="1.2" fill="none" stroke="#555" stroke-width="0.8"/><path d="M0.5 4 H6 L4 5.5 V10.5 M2.5 5.5 V10" stroke="#555" stroke-width="0.9" fill="none"/><path d="M5.5 8 L7 10 L10 5" stroke="#555" stroke-width="0.9" fill="none"/></svg>
<div class="t" style="left:75.00px;top:707.02px;font-size:8.6px;color:#262626;transform:scaleX(0.896);transform-origin:0 0;">Accessibility: Good to go</div>
<div class="a" style="left:769.30px;top:686.50px;width:1.70px;height:1.50px;background:#555;"></div>
<div class="a" style="left:769.30px;top:689.60px;width:1.70px;height:1.50px;background:#555;"></div>
<div class="a" style="left:769.30px;top:692.70px;width:1.70px;height:1.50px;background:#555;"></div>
<div class="a" style="left:780.60px;top:685.00px;width:486.10px;height:11.30px;background:#f6f6f7;border-radius:6px"></div>
<svg class="a" style="left:783.7px;top:688px;" width="5.2" height="6.2" viewBox="0 0 5.2 6.2"><path d="M5.2 0 V6.2 L0 3.1 Z" fill="#555"/></svg>
<svg class="a" style="left:1259.4px;top:688px;" width="5.2" height="6.2" viewBox="0 0 5.2 6.2"><path d="M0 0 V6.2 L5.2 3.1 Z" fill="#555"/></svg>
<div class="a" style="left:791.80px;top:687.80px;width:454.40px;height:6.20px;background:#6d6d6d;border-radius:3px"></div>
<div class="a" style="left:1265.60px;top:128.50px;width:14.40px;height:551.10px;background:#f6f6f7;"></div>
<svg class="a" style="left:1269.8px;top:132.5px;" width="6.2" height="5" viewBox="0 0 6.2 5"><path d="M0 5 H6.2 L3.1 0 Z" fill="#555"/></svg>
<svg class="a" style="left:1269.8px;top:673px;" width="6.2" height="5" viewBox="0 0 6.2 5"><path d="M0 0 H6.2 L3.1 5 Z" fill="#555"/></svg>
<div class="a" style="left:1270.00px;top:142.50px;width:5.80px;height:525.30px;background:#6d6d6d;border-radius:3px"></div>
<div class="a" style="left:1278.00px;top:228.80px;width:2.00px;height:12.00px;background:#111;"></div>
<div class="t" style="left:944.90px;top:707.39px;font-size:8.4px;color:#262626;transform:scaleX(0.865);transform-origin:0 0;">Average: 6.1</div>
<div class="t" style="left:996.50px;top:707.39px;font-size:8.4px;color:#262626;transform:scaleX(0.945);transform-origin:0 0;">Count: 11</div>
<div class="t" style="left:1040.40px;top:707.39px;font-size:8.4px;color:#262626;transform:scaleX(0.863);transform-origin:0 0;">Sum: 61</div>
<div class="a" style="left:1079.90px;top:703.40px;width:26.70px;height:14.20px;background:#e2e2e2;"></div>
<svg class="a" style="left:1088.6px;top:705.5px;" width="9.5" height="9.5" viewBox="0 0 9.5 9.5"><path d="M0.5 0.5 H9 V9 H0.5 Z M3.3 0.5 V9 M6.2 0.5 V9 M0.5 3.3 H9 M0.5 6.2 H9" stroke="#333" stroke-width="0.8" fill="none"/></svg>
<svg class="a" style="left:1114.9px;top:705.5px;" width="10.5" height="9.5" viewBox="0 0 10.5 9.5"><rect x="0.5" y="0.5" width="9.5" height="8.5" fill="none" stroke="#444" stroke-width="0.8"/><rect x="2.8" y="2.3" width="5" height="5" fill="none" stroke="#444" stroke-width="0.8"/></svg>
<svg class="a" style="left:1141.8px;top:705.5px;" width="9.5" height="9.5" viewBox="0 0 9.5 9.5"><path d="M0.5 9 V0.5 H9 V9 M3.5 0.5 V5 H6.5 V0.5" stroke="#444" stroke-width="0.8" fill="none"/></svg>
<div class="a" style="left:1164.00px;top:709.60px;width:5.00px;height:0.90px;background:#444;"></div>
<div class="a" style="left:1172.90px;top:709.80px;width:66.70px;height:0.80px;background:#888;"></div>
<div class="a" style="left:1204.60px;top:705.00px;width:3.30px;height:11.00px;background:#444;"></div>
<svg class="a" style="left:1242.5px;top:707.5px;" width="5" height="5" viewBox="0 0 5 5"><path d="M2.5 0 V5 M0 2.5 H5" stroke="#444" stroke-width="0.8"/></svg>
<div class="t" style="left:1257.10px;top:706.86px;font-size:8.2px;color:#262626;transform:scaleX(0.834);transform-origin:0 0;">100%</div>
<div class="a" style="left:342.10px;top:140.80px;width:58.90px;height:542.10px;background:transparent;border:3px solid #e60000"></div>
<div class="a" style="left:513.10px;top:359.50px;width:498.80px;height:72.00px;background:#a8c8ea;border:3px solid #e60000"></div>
<div class="t" style="left:523.75px;top:369.80px;font-size:21.5px;color:#0a0a0a;transform:scaleX(1.075);transform-origin:0 0;-webkit-text-stroke:0.15px #0a0a0a;">Select the entire column by pressing</div>
<div class="t" style="left:902.80px;top:369.80px;font-size:21.5px;font-weight:bold;color:#0a0a0a;transform:scaleX(1.029);transform-origin:0 0;">Ctrl +</div>
<div class="t" style="left:523.75px;top:400.60px;font-size:21.5px;font-weight:bold;color:#0a0a0a;transform:scaleX(1.056);transform-origin:0 0;">Space</div>
<div class="t" style="left:592.50px;top:400.60px;font-size:21.5px;font-weight:bold;color:#0a0a0a;transform:scaleX(0.623);transform-origin:0 0;">.</div>
<div class="a" style="left:406.00px;top:394.10px;width:107.50px;height:2.80px;background:#e60000;"></div>
<svg class="a" style="left:401px;top:391.2px;" width="8" height="8.5" viewBox="0 0 8 8.5"><path d="M0 4.25 L8 0 L8 8.5 Z" fill="#e60000"/></svg>
<div class="a" style="left:503.00px;top:470.80px;width:158.50px;height:104.20px;background:#fff;"></div>
<div class="a" style="left:724.00px;top:470.80px;width:314.30px;height:104.20px;background:#fff;"></div>
<div class="a" style="left:507.4px;top:476.9px;width:151.3px;height:93.4px;border-radius:13px;background:linear-gradient(105deg,#3a3a3a 0%,#282828 35%,#151515 65%,#0d0d0d 100%);border:2px solid #050505"></div>
<div class="a" style="left:519.9px;top:478.8px;width:126.3px;height:73.9px;border-radius:12px;background:linear-gradient(90deg,#262626,#383838);box-shadow:0 1px 0.5px #3c3c3c,-0.5px 0.5px 0.5px #3a3a3a"></div>
<svg class="a" style="left:617.5px;top:494.2px;" width="16.3" height="8.3" viewBox="0 0 16.3 8.3"><path d="M0.8 7.6 L8.15 0.8 L15.5 7.6" stroke="#f2f2f2" stroke-width="1.5" fill="none"/></svg>
<div class="t" style="left:570.00px;top:518.27px;font-size:20px;color:#f5f5f5;transform:scaleX(1.042);transform-origin:0 0;-webkit-text-stroke:0.2px #f5f5f5">control</div>
<div class="a" style="left:674.00px;top:518.60px;width:39.80px;height:8.60px;background:#000;"></div>
<div class="a" style="left:689.30px;top:502.90px;width:9.00px;height:40.20px;background:#000;"></div>
<div class="a" style="left:729.5px;top:476.3px;width:302.5px;height:94.2px;border-radius:13px;background:linear-gradient(100deg,#585858 0%,#3e3e3e 30%,#1f1f1f 62%,#121212 100%);border:2px solid #050505"></div>
<div class="a" style="left:745px;top:478px;width:271px;height:74.5px;border-radius:12px;background:linear-gradient(90deg,#484848,#646464);box-shadow:0 1px 0.5px #666,-0.5px 0.5px 0.5px #5a5a5a"></div>
<svg class="a" style="left:873px;top:495.5px;" width="16" height="6" viewBox="0 0 16 6"><path d="M0.7 0 V5.3 H15.3 V0" stroke="#eee" stroke-width="1.3" fill="none"/></svg>
<div class="t" style="left:852.50px;top:517.87px;font-size:20px;color:#f5f5f5;transform:scaleX(1.039);transform-origin:0 0;-webkit-text-stroke:0.2px #f5f5f5">space</div>
</body></html>
